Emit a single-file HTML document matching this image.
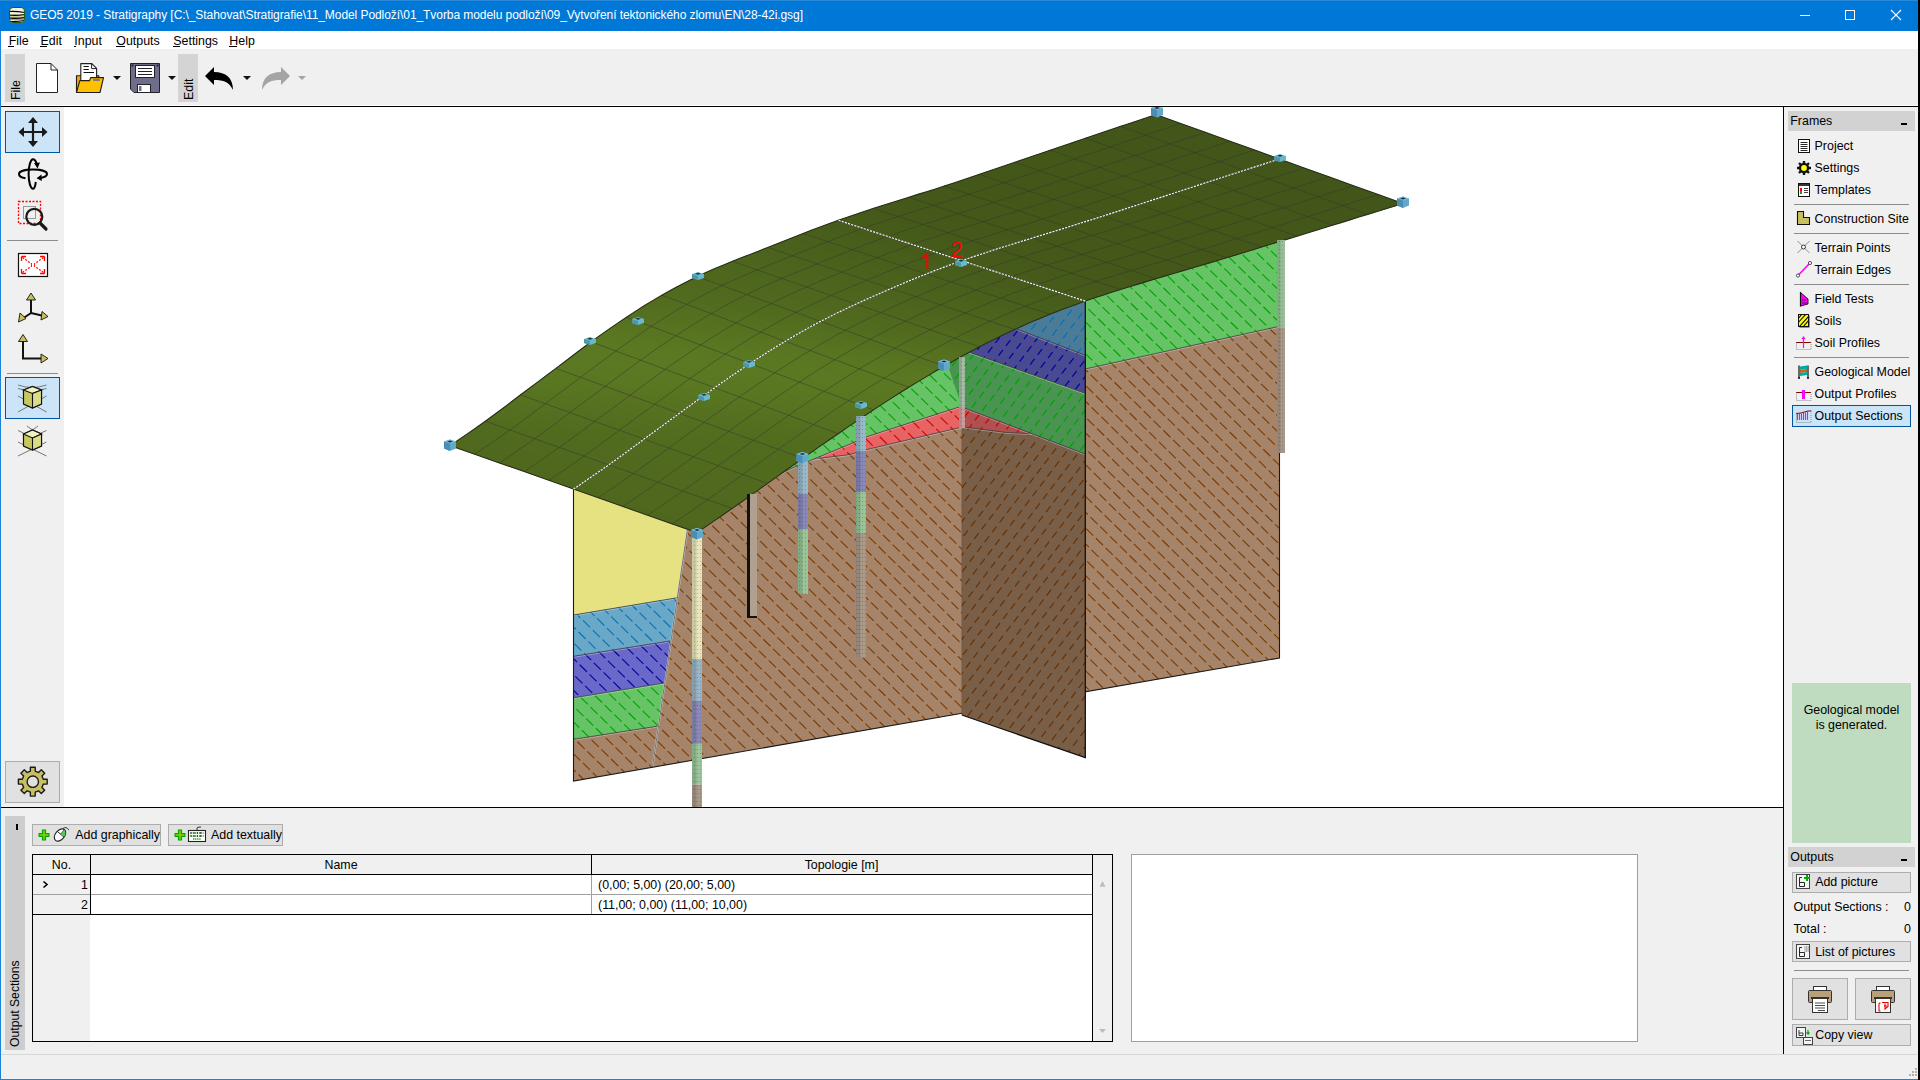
<!DOCTYPE html><html><head><meta charset="utf-8"><style>
*{margin:0;padding:0;box-sizing:border-box}
html,body{width:1920px;height:1080px;overflow:hidden;background:#000;font-family:"Liberation Sans",sans-serif;font-size:12px;color:#000}
.a{position:absolute}
.t{position:absolute;white-space:nowrap;line-height:1}
svg{overflow:visible}
</style></head><body><div class="a" style="left:0px;top:0px;width:1918px;height:1080px;background:#f0f0f0"></div><div class="a" style="left:0px;top:0px;width:1918px;height:31px;background:#0078d7"></div><div class="a" style="left:0px;top:0px;width:1918px;height:1px;background:#2a8ad9"></div><div class="a" style="left:0px;top:31px;width:1px;height:1049px;background:#1a82d9"></div><div class="a" style="left:0px;top:1079px;width:1918px;height:1px;background:#1a82d9"></div><svg class="a" style="left:8px;top:6px" width="18" height="18" viewBox="8 6 18 18"><clipPath id="ic"><rect x="9.5" y="7.5" width="15" height="15" rx="3.5"/></clipPath>
<g clip-path="url(#ic)"><rect x="9" y="7" width="16" height="16" fill="#f2f2e2"/>
<rect x="9" y="14" width="16" height="3" fill="#cfd0a0"/><rect x="9" y="17" width="16" height="3" fill="#a0a0a0"/><rect x="9" y="20" width="16" height="3" fill="#e8e8e8"/>
<path d="M9 11.5 Q15 11 25 12.5 M9 15 Q15 16 25 14.5 M9 18 Q15 19 25 17.5 M9 21.5 Q16 22 25 20.5" stroke="#000" stroke-width="1.2" fill="none"/></g>
<rect x="9.5" y="7.5" width="15" height="15" rx="3.5" fill="none" stroke="#2a5a10" stroke-width="1"/></svg><div class="t" style="left:30px;top:9.34px;font-size:12px;color:#fff;letter-spacing:-0.068px">GEO5 2019 - Stratigraphy [C:\_Stahovat\Stratigrafie\11_Model Podloží\01_Tvorba modelu podloží\09_Vytvoření tektonického zlomu\EN\28-42i.gsg]</div><svg class="a" style="left:1790px;top:8px" width="120" height="16" viewBox="1790 8 120 16"><rect x="1800" y="15" width="10" height="1" fill="#fff"/>
<rect x="1845.5" y="10.5" width="9" height="9" fill="none" stroke="#fff"/>
<path d="M1891 10 L1901 20 M1901 10 L1891 20" stroke="#fff" stroke-width="1.1"/></svg><div class="a" style="left:1px;top:31px;width:1917px;height:18px;background:#fff"></div><div class="t" style="left:8.8px;top:34.70px;font-size:12.4px;">File</div><div class="a" style="left:8px;top:46px;width:6px;height:1px;background:#000"></div><div class="t" style="left:40.5px;top:34.70px;font-size:12.4px;">Edit</div><div class="a" style="left:40px;top:46px;width:6.5px;height:1px;background:#000"></div><div class="t" style="left:74.3px;top:34.70px;font-size:12.4px;">Input</div><div class="a" style="left:74px;top:46px;width:1.5px;height:1px;background:#000"></div><div class="t" style="left:116.3px;top:34.70px;font-size:12.4px;">Outputs</div><div class="a" style="left:116px;top:46px;width:9px;height:1px;background:#000"></div><div class="t" style="left:173.3px;top:34.70px;font-size:12.4px;">Settings</div><div class="a" style="left:173px;top:46px;width:7px;height:1px;background:#000"></div><div class="t" style="left:229.3px;top:34.70px;font-size:12.4px;">Help</div><div class="a" style="left:229px;top:46px;width:8px;height:1px;background:#000"></div><div class="a" style="left:1px;top:105px;width:1917px;height:1px;background:#fff"></div><div class="a" style="left:1px;top:106px;width:1917px;height:1px;background:#000"></div><div class="a" style="left:5px;top:54px;width:20px;height:48px;background:#d4d4d4"></div><div class="t" style="left:9.6px;top:99.5px;transform:rotate(-90deg);transform-origin:0 0;font-size:12.4px">File</div><div class="a" style="left:178px;top:54px;width:20px;height:48px;background:#d4d4d4"></div><div class="t" style="left:182.6px;top:99.5px;transform:rotate(-90deg);transform-origin:0 0;font-size:12.4px">Edit</div><svg class="a" style="left:30px;top:58px" width="290" height="40" viewBox="30 58 290 40">
 <path d="M36.5 63.5 H51 L57.5 70 V92.5 H36.5 Z" fill="#fff" stroke="#222"/>
 <path d="M51 63.5 V70 H57.5" fill="none" stroke="#222"/>
 <path d="M76.5 75.8 H98.8 V78 L97 92.5 H76.5 Z" fill="#f5a800" stroke="#1e1e1e" stroke-width="1.1" stroke-linejoin="round"/>
 <path d="M80.8 63.6 H91.8 L96.6 68.4 V80.5 H80.8 Z" fill="#fff" stroke="#1e1e1e" stroke-width="1.1" stroke-linejoin="round"/>
 <path d="M91.6 63.8 V68.6 H96.4" fill="none" stroke="#1e1e1e" stroke-width="1"/>
 <path d="M83.5 66.5 H88.8 M83.5 69.5 H88.8 M83.5 72.5 H94" stroke="#111" stroke-width="1"/>
 <path d="M79.8 80.6 H89.6 L90.6 77.6 H103.5 L100 92.5 H76.5 Z" fill="#ffc000" stroke="#1e1e1e" stroke-width="1.1" stroke-linejoin="round"/>
 <rect x="93.2" y="79.2" width="6.6" height="1.6" fill="#5a6a9a"/>
 <path d="M113 76 H121 L117 80 Z" fill="#111"/>
 <path d="M130.5 63.5 H159.5 V92.5 H134 L130.5 89 Z" fill="#6e6e8c" stroke="#222"/>
 <rect x="135.5" y="65.5" width="19" height="12" fill="#fff" stroke="#222"/>
 <path d="M138 68.5 H152 M138 71.5 H152 M138 74.5 H152" stroke="#222"/>
 <rect x="137.5" y="84.5" width="13" height="8" fill="#fff" stroke="#222"/>
 <rect x="139" y="86" width="2.5" height="5" fill="#6e6e8c"/>
 <rect x="131.5" y="64.5" width="2" height="2" fill="#222"/>
 <rect x="156.5" y="64.5" width="2" height="2" fill="#222"/>
 <path d="M168 76 H176 L172 80 Z" fill="#111"/>
 <path d="M205 76 L214 67 V72 C226 72 233 78 233 90 C229 82 224 80 214 80 V85 Z" fill="#000"/>
 <path d="M243 76 H251 L247 80 Z" fill="#111"/>
 <path d="M290 76 L281 67 V72 C269 72 262 78 262 90 C266 82 271 80 281 80 V85 Z" fill="#a4a4a4"/>
 <path d="M298 76 H306 L302 80 Z" fill="#a4a4a4"/>
</svg><div class="a" style="left:64px;top:107px;width:1719px;height:700px;background:#fff"></div><div class="a" style="left:1783px;top:107px;width:1px;height:948px;background:#000"></div><div class="a" style="left:1px;top:807px;width:1782px;height:1px;background:#000"></div><div class="a" style="left:5px;top:111px;width:55px;height:42px;background:#cce4f7;border:1px solid #0055a0"></div><div class="a" style="left:5px;top:377px;width:55px;height:42px;background:#cce4f7;border:1px solid #0055a0"></div><div class="a" style="left:7px;top:240px;width:51px;height:1px;background:#8c8c8c"></div><div class="a" style="left:7px;top:373px;width:51px;height:1px;background:#8c8c8c"></div><div class="a" style="left:5px;top:761px;width:55px;height:42px;background:#e1e1e1;border:1px solid #adadad"></div><svg class="a" style="left:0px;top:107px" width="64" height="700" viewBox="0 107 64 700">
 <path d="M33 119 V145 M20 132 H46" stroke="#1a1a1a" stroke-width="2.2"/>
 <path d="M33 117 L28 123 H38 Z M33 147 L28 141 H38 Z M18.5 132 L24 127 V137 Z M47.5 132 L42 127 V137 Z" fill="#1a1a1a"/>
 <path d="M25.5 178.3 C21 177.6 19 176 19 174 C19 171.2 25.2 169.5 33 169.5 C40.8 169.5 47 171.2 47 174 C47 176 44 177.4 40 178" fill="none" stroke="#000" stroke-width="2"/>
 <path d="M35.8 182 C35.2 186.5 34.2 188.8 33 188.8 C30.6 188.8 28.6 182 28.6 174 C28.6 166 30.6 159.2 33 159.2 C34.6 159.2 35.8 161 36.6 163.5" fill="none" stroke="#000" stroke-width="2"/>
 <path d="M34 163 L40 162.5 L37.5 168.5 Z M41.5 174.5 L36.5 178.2 L41.8 181 Z" fill="#000"/>
 <rect x="18.5" y="201.5" width="22" height="22" fill="none" stroke="#f00" stroke-width="1.3" stroke-dasharray="2 1.5"/>
 <rect x="23.5" y="206.5" width="12" height="12" fill="none" stroke="#999" stroke-width="1"/>
 <circle cx="34.3" cy="216.8" r="8" fill="none" stroke="#1a1a1a" stroke-width="2.2"/>
 <path d="M40 223 L46 229" stroke="#1a1a1a" stroke-width="3.2" stroke-linecap="round"/>
 <rect x="18.5" y="253.5" width="29" height="23" fill="#fff" stroke="#111" stroke-width="1.2"/>
 <path d="M22.5 257.5 L31 263.5 M43.5 257.5 L35 263.5 M22.5 272.5 L31 266.5 M43.5 272.5 L35 266.5" stroke="#f00" stroke-width="1.2" stroke-dasharray="2 1.4"/>
 <path d="M31.5 263 V267 M34.5 263 V267" stroke="#f00" stroke-width="0.9"/>
 <path d="M21.5 256.5 H26 M21.5 256.5 V261 M44.5 256.5 H40 M44.5 256.5 V261 M21.5 273.5 H26 M21.5 273.5 V269 M44.5 273.5 H40 M44.5 273.5 V269" stroke="#f00" stroke-width="1.3"/>
 <path d="M31 299 V313 L22 319 M31 313 L44 316" stroke="#111" stroke-width="2" fill="none"/>
 <path d="M31 293 L26.5 300 H35.5 Z" fill="#c8c060" stroke="#111" stroke-width="0.9"/>
 <path d="M18.5 322 L20 313 L26 318.5 Z" fill="#c8c060" stroke="#111" stroke-width="0.9"/>
 <path d="M48 316.5 L41 320 L42 311.5 Z" fill="#c8c060" stroke="#111" stroke-width="0.9"/>
 <path d="M23 339 V358.5 H43" stroke="#111" stroke-width="2" fill="none"/>
 <path d="M23 334.5 L18.5 341.5 H27.5 Z" fill="#c8c060" stroke="#111" stroke-width="0.9"/>
 <path d="M48 358.5 L41 354 V363 Z" fill="#c8c060" stroke="#111" stroke-width="0.9"/>
 <path d="M18 385 Q32 390 46.5 385 M18 388.5 Q32 393 46.5 388.5 M18 396 L46.5 412 M46.5 396 L18 412" stroke="#777" stroke-width="1" fill="none"/>
 <path d="M23.5 390 L32.5 386.5 L41.5 390 V404 L32.5 408 L23.5 404 Z" fill="#c8c860" stroke="#111" stroke-width="1.2"/>
 <path d="M23.5 390 L32.5 393.5 L41.5 390 L32.5 386.5 Z" fill="#f0f0c0" stroke="#111" stroke-width="1.1"/>
 <path d="M32.5 393.5 V408 L41.5 404 V390 Z" fill="#dcdc88" stroke="#111" stroke-width="1.1"/>
 <path d="M27 426 L32.5 430 L38 426 M18 430.5 L23.5 433 M46.5 430.5 L41 433 M18 442 L46.5 456 M46.5 442 L18 456" stroke="#777" stroke-width="1" fill="none"/>
 <path d="M23.5 434 L32.5 430 L41.5 434 V446 L32.5 450 L23.5 446 Z" fill="#c8c860" stroke="#111" stroke-width="1.2"/>
 <path d="M23.5 434 L32.5 438 L41.5 434 L32.5 430 Z" fill="#f0f0c0" stroke="#111" stroke-width="1.1"/>
 <path d="M32.5 438 V450 L41.5 446 V434 Z" fill="#dcdc88" stroke="#111" stroke-width="1.1"/>
 <g transform="translate(32.8,781.7)">
  <path d="M10.52,-2.43 L14.40,-2.41 L14.40,2.41 L10.52,2.43 L9.16,5.72 L11.89,8.48 L8.48,11.89 L5.72,9.16 L2.43,10.52 L2.41,14.40 L-2.41,14.40 L-2.43,10.52 L-5.72,9.16 L-8.48,11.89 L-11.89,8.48 L-9.16,5.72 L-10.52,2.43 L-14.40,2.41 L-14.40,-2.41 L-10.52,-2.43 L-9.16,-5.72 L-11.89,-8.48 L-8.48,-11.89 L-5.72,-9.16 L-2.43,-10.52 L-2.41,-14.40 L2.41,-14.40 L2.43,-10.52 L5.72,-9.16 L8.48,-11.89 L11.89,-8.48 L9.16,-5.72 Z" fill="#c8c060" stroke="#1a1a1a" stroke-width="1.4" stroke-linejoin="round"/>
  <circle r="5.7" fill="#e1e1e1" stroke="#1a1a1a" stroke-width="1.4"/>
 </g>
</svg><div class="a" style="left:1784px;top:107px;width:134px;height:948px;background:#f0f0f0"></div><div class="a" style="left:1788px;top:111px;width:127px;height:20px;background:#d2d2d2"></div><div class="t" style="left:1790.3px;top:114.70px;font-size:12.4px;">Frames</div><div class="a" style="left:1901px;top:123px;width:6px;height:2px;background:#000"></div><div class="a" style="left:1792px;top:405px;width:119px;height:22px;background:#cce4f7;border:1px solid #0055a0"></div><div class="t" style="left:1814.6px;top:139.80px;font-size:12.4px;">Project</div><div class="t" style="left:1814.6px;top:162.10px;font-size:12.4px;">Settings</div><div class="t" style="left:1814.6px;top:183.90px;font-size:12.4px;">Templates</div><div class="t" style="left:1814.6px;top:212.90px;font-size:12.4px;">Construction Site</div><div class="t" style="left:1814.6px;top:241.90px;font-size:12.4px;">Terrain Points</div><div class="t" style="left:1814.6px;top:263.90px;font-size:12.4px;">Terrain Edges</div><div class="t" style="left:1814.6px;top:292.90px;font-size:12.4px;">Field Tests</div><div class="t" style="left:1814.6px;top:314.90px;font-size:12.4px;">Soils</div><div class="t" style="left:1814.6px;top:336.90px;font-size:12.4px;">Soil Profiles</div><div class="t" style="left:1814.6px;top:365.90px;font-size:12.4px;">Geological Model</div><div class="t" style="left:1814.6px;top:387.90px;font-size:12.4px;">Output Profiles</div><div class="t" style="left:1814.6px;top:409.70px;font-size:12.4px;">Output Sections</div><div class="a" style="left:1794px;top:204px;width:115px;height:1px;background:#8c8c8c"></div><div class="a" style="left:1794px;top:233px;width:115px;height:1px;background:#8c8c8c"></div><div class="a" style="left:1794px;top:284px;width:115px;height:1px;background:#8c8c8c"></div><div class="a" style="left:1794px;top:357px;width:115px;height:1px;background:#8c8c8c"></div><svg class="a" style="left:1790px;top:135px" width="26" height="295" viewBox="1790 135 26 295">
 <rect x="1798.5" y="139.5" width="11" height="13" fill="#fff" stroke="#111"/>
 <path d="M1800.5 142.5 H1807.5 M1800.5 144.5 H1807.5 M1800.5 146.5 H1807.5 M1800.5 148.5 H1807.5 M1800.5 150.5 H1807.5" stroke="#111" stroke-width="0.9"/>
 <g transform="translate(1804,168)"><circle r="5.2" fill="#111"/>
  <path d="M0,-7 V7 M-7,0 H7 M-5,-5 L5,5 M5,-5 L-5,5" stroke="#111" stroke-width="2.4"/><circle r="2.9" fill="#ff0"/></g>
 <rect x="1798.5" y="183.5" width="11" height="13" fill="#fff" stroke="#111"/>
 <rect x="1799" y="184" width="10" height="2" fill="#333"/>
 <rect x="1800" y="188" width="2" height="3" fill="#f00"/><rect x="1800" y="191" width="2" height="3" fill="#0a0"/>
 <path d="M1804 188.5 H1808 M1804 190.5 H1808 M1804 192.5 H1808" stroke="#111" stroke-width="0.8"/>
 <path d="M1797.5 211.5 H1803.5 V217.5 H1809.5 V224.5 H1797.5 Z" fill="#c8c060" stroke="#111" stroke-width="1.1"/>
 <path d="M1797.5 241 L1809.5 253 M1809.5 241 L1797.5 253" stroke="#777" stroke-width="0.8"/>
 <circle cx="1803.5" cy="247" r="2" fill="#fff" stroke="#111" stroke-width="0.8"/>
 <path d="M1798 275.5 L1809.5 263.5" stroke="#f0f" stroke-width="1.6"/>
 <circle cx="1798" cy="275.5" r="1.6" fill="#fff" stroke="#111" stroke-width="0.7"/>
 <circle cx="1810" cy="263" r="1.6" fill="#fff" stroke="#111" stroke-width="0.7"/>
 <path d="M1800.5 292.5 V306 L1808 304 V299 Z" fill="#f0f" stroke="#111" stroke-width="0.9"/>
 <path d="M1800.5 292 V306.5" stroke="#111" stroke-width="1.2"/>
 <path d="M1802 300 H1806 M1802 303 H1807" stroke="#111" stroke-width="0.7"/>
 <rect x="1799.5" y="315.5" width="10" height="12" fill="#333"/>
 <rect x="1798.5" y="314.5" width="10" height="12" fill="#ffff00" stroke="#111"/>
 <clipPath id="soilc"><rect x="1799" y="315" width="9" height="11"/></clipPath>
 <path clip-path="url(#soilc)" d="M1797 320 L1803 313 M1797 324 L1807 313 M1799 327 L1809 316 M1803 327 L1809 320" stroke="#111" stroke-width="1.1"/>
 <path d="M1796 342.5 H1811" stroke="#800" stroke-width="1"/>
 <path d="M1796.5 342.5 V349.5 H1811 V342.5" stroke="#777" stroke-width="0.8" stroke-dasharray="1 1" fill="none"/>
 <path d="M1803.5 338 V348" stroke="#f0f" stroke-width="1.2"/>
 <path d="M1803.5 336 L1801.5 339 H1805.5 Z" fill="#f0f"/>
 <path d="M1799 365.5 V378 M1808 365.5 V378" stroke="#111" stroke-width="1.2"/>
 <circle cx="1799" cy="378" r="1" fill="#111"/><circle cx="1808" cy="378" r="1" fill="#111"/>
 <path d="M1800 366.5 L1807 365.5 V369 L1800 370 Z" fill="#0aa"/>
 <path d="M1800 370 L1807 369 V372 L1800 373 Z" fill="#c60"/>
 <path d="M1800 373 L1807 372 V375 L1800 376 Z" fill="#0aa"/>
 <path d="M1796 392.5 H1811" stroke="#800" stroke-width="1"/>
 <path d="M1796.5 392.5 V400.5 H1811 V392.5" stroke="#777" stroke-width="0.8" stroke-dasharray="1 1" fill="none"/>
 <rect x="1802" y="390" width="3" height="9" fill="#f0f"/>
 <path d="M1796 413.5 L1801 413 L1808 411 L1811.5 411" stroke="#800" stroke-width="1" fill="none"/>
 <path d="M1796.5 413.5 V422.5 H1811 V413.5" stroke="#777" stroke-width="0.8" stroke-dasharray="1 1" fill="none"/>
 <path d="M1797.5 414 V420 M1799.5 414 V420 M1801.5 413.5 V420 M1803.5 413 V420 M1805.5 412.5 V420 M1807.5 412 V420" stroke="#f0f" stroke-width="1.1"/>
</svg><div class="a" style="left:1792px;top:683px;width:119px;height:160px;background:#c0dcc0"></div><div class="t" style="left:1651.5px;width:400px;text-align:center;top:704.40px;font-size:12.4px;">Geological model</div><div class="t" style="left:1651.5px;width:400px;text-align:center;top:719.40px;font-size:12.4px;">is generated.</div><div class="a" style="left:1788px;top:847px;width:127px;height:20px;background:#d2d2d2"></div><div class="t" style="left:1790.3px;top:851.30px;font-size:12.4px;">Outputs</div><div class="a" style="left:1901px;top:859px;width:6px;height:2px;background:#000"></div><div class="a" style="left:1792px;top:872px;width:119px;height:21px;background:#e1e1e1;border:1px solid #adadad"></div><div class="t" style="left:1815.2px;top:876.30px;font-size:12.4px;">Add picture</div><div class="t" style="left:1793.5px;top:900.70px;font-size:12.4px;">Output Sections :</div><div class="t" style="left:1711px;width:200px;text-align:right;top:900.70px;font-size:12.4px;">0</div><div class="t" style="left:1793.5px;top:923.40px;font-size:12.4px;">Total :</div><div class="t" style="left:1711px;width:200px;text-align:right;top:923.40px;font-size:12.4px;">0</div><div class="a" style="left:1792px;top:941px;width:119px;height:21px;background:#e1e1e1;border:1px solid #adadad"></div><div class="t" style="left:1815.2px;top:946.30px;font-size:12.4px;">List of pictures</div><div class="a" style="left:1794px;top:970px;width:115px;height:1px;background:#8c8c8c"></div><div class="a" style="left:1792px;top:978px;width:56px;height:42px;background:#e1e1e1;border:1px solid #adadad"></div><div class="a" style="left:1855px;top:978px;width:56px;height:42px;background:#e1e1e1;border:1px solid #adadad"></div><div class="a" style="left:1792px;top:1024px;width:119px;height:22px;background:#e1e1e1;border:1px solid #adadad"></div><div class="t" style="left:1815.2px;top:1028.70px;font-size:12.4px;">Copy view</div><svg class="a" style="left:1790px;top:870px" width="125" height="180" viewBox="1790 870 125 180">
 <rect x="1796.5" y="874.5" width="13" height="14" fill="#f4f4f4" stroke="#444"/>
 <path d="M1799.5 877.5 V886.5 H1804.5 V882.5 H1799.5 M1799.5 877.5 H1802" stroke="#111" stroke-width="0.9" fill="none"/>
 <path d="M1807 875 V881 M1804 878 H1810" stroke="#0a0" stroke-width="2"/>
 <rect x="1796.5" y="944.5" width="13" height="14" fill="#f4f4f4" stroke="#444"/>
 <path d="M1799.5 947.5 V956.5 H1804.5 V952.5 H1799.5 M1799.5 947.5 H1802" stroke="#111" stroke-width="0.9" fill="none"/>
 <path d="M1804.5 947 H1809 M1804.5 949 H1809 M1804.5 951 H1809" stroke="#111" stroke-width="0.7" stroke-dasharray="1 0.6"/>
 <g>
  <rect x="1813.5" y="986.5" width="13" height="6" fill="#fff" stroke="#333"/>
  <rect x="1808.5" y="990.5" width="23" height="12" rx="1" fill="#b8a078" stroke="#333"/>
  <rect x="1811" y="997" width="18" height="2" fill="#333"/>
  <rect x="1812.5" y="998.5" width="15" height="14" fill="#fff" stroke="#333"/>
  <path d="M1815 1003 H1825 M1815 1005.5 H1825 M1815 1008 H1825 M1818 1010.5 H1825" stroke="#333" stroke-width="0.9"/>
 </g>
 <g transform="translate(63,0)">
  <rect x="1813.5" y="986.5" width="13" height="6" fill="#fff" stroke="#333"/>
  <rect x="1808.5" y="990.5" width="23" height="12" rx="1" fill="#b8a078" stroke="#333"/>
  <rect x="1811" y="997" width="18" height="2" fill="#333"/>
  <rect x="1812.5" y="998.5" width="15" height="14" fill="#fff" stroke="#333"/>
  <path d="M1816 1003 V1011 H1817.5 M1816 1003 H1817.5 M1819 1002.5 H1825 V1006.5 L1822 1009 V1003.5 M1821 1006 H1824" stroke="#e00" stroke-width="1.1" fill="none"/>
 </g>
 <rect x="1796.5" y="1027.5" width="9" height="10" fill="#f4f4f4" stroke="#444"/>
 <path d="M1799 1030 V1035.5 H1803 V1033 H1799" stroke="#111" stroke-width="0.8" fill="none"/>
 <path d="M1808 1030 V1034 L1806.5 1032.5 M1808 1034 L1809.5 1032.5" stroke="#0a0" stroke-width="1.1" fill="none"/>
 <rect x="1803.5" y="1037.5" width="9" height="7" fill="#f4f4f4" stroke="#444"/>
 <path d="M1805 1040.5 H1811" stroke="#444" stroke-width="0.8"/>
</svg><svg class="a" style="left:1900px;top:1060px" width="18" height="19" viewBox="1900 1060 18 19"><g fill="#b0b0b0"><rect x="1915" y="1068" width="2" height="2"/><rect x="1912" y="1071" width="2" height="2"/><rect x="1915" y="1071" width="2" height="2"/>
<rect x="1909" y="1074" width="2" height="2"/><rect x="1912" y="1074" width="2" height="2"/><rect x="1915" y="1074" width="2" height="2"/></g></svg><div class="a" style="left:1px;top:1054px;width:1917px;height:1px;background:#d8d8d8"></div><div class="a" style="left:5px;top:816px;width:20px;height:234px;background:#cdcdcd"></div><div class="a" style="left:16px;top:824px;width:2px;height:6px;background:#000"></div><div class="t" style="left:8.7px;top:1046.5px;transform:rotate(-90deg);transform-origin:0 0;font-size:12.2px">Output Sections</div><div class="a" style="left:32px;top:824px;width:129px;height:22px;background:#e1e1e1;border:1px solid #adadad"></div><div class="t" style="left:75.3px;top:828.60px;font-size:12.4px;">Add graphically</div><div class="a" style="left:168px;top:824px;width:115px;height:22px;background:#e1e1e1;border:1px solid #adadad"></div><div class="t" style="left:211px;top:828.60px;font-size:12.4px;">Add textually</div><svg class="a" style="left:34px;top:826px" width="250" height="20" viewBox="34 826 250 20">
 <path d="M44 829.5 V840.5 M38.5 835 H49.5" stroke="#00a800" stroke-width="4.2"/>
 <path d="M44 830.6 V839.4 M39.6 835 H48.4" stroke="#8ad000" stroke-width="1.6"/>
 <g transform="translate(60,835) rotate(40)"><ellipse rx="4.6" ry="7" fill="#fff" stroke="#222" stroke-width="1.1"/><path d="M-4.4,-1 H4.4 M0,-7 V-1" stroke="#222" stroke-width="0.9"/><path d="M0.3,-6.5 Q3.5,-6 4.2,-1.4 H0.3 Z" fill="#5c5"/></g>
 <path d="M63 828.5 Q66 826 69 830" stroke="#222" stroke-width="0.9" fill="none"/>
 <path d="M180 829.5 V840.5 M174.5 835 H185.5" stroke="#00a800" stroke-width="4.2"/>
 <path d="M180 830.6 V839.4 M175.6 835 H184.4" stroke="#8ad000" stroke-width="1.6"/>
 <rect x="188.5" y="830.5" width="17" height="11" fill="#fff" stroke="#222" stroke-width="1.1"/>
 <path d="M190.5 833 H203.5 M190.5 836 H203.5 M193 839 H201" stroke="#0a0" stroke-width="1.3" stroke-dasharray="1.3 0.8"/>
 <path d="M190.5 833 H203.5 M190.5 836 H203.5" stroke="#111" stroke-width="1.3" stroke-dasharray="0.9 2.3"/>
 <path d="M197 830 V828 Q197 827 201 827" stroke="#222" stroke-width="0.9" fill="none"/>
</svg><div class="a" style="left:32px;top:854px;width:1081px;height:188px;background:#fff;border:1px solid #000"></div><div class="a" style="left:33px;top:855px;width:57px;height:186px;background:#f0f0f0"></div><div class="a" style="left:33px;top:855px;width:1059px;height:19px;background:#f0f0f0"></div><div class="a" style="left:1092px;top:855px;width:20px;height:186px;background:#f0f0f0"></div><div class="a" style="left:1092px;top:854px;width:1px;height:188px;background:#000"></div><div class="a" style="left:33px;top:874px;width:1059px;height:1px;background:#000"></div><div class="a" style="left:33px;top:894px;width:1059px;height:1px;background:#a0a0a0"></div><div class="a" style="left:33px;top:914px;width:1059px;height:1px;background:#000"></div><div class="a" style="left:90px;top:855px;width:1px;height:59px;background:#000"></div><div class="a" style="left:591px;top:855px;width:1px;height:19px;background:#000"></div><div class="a" style="left:591px;top:875px;width:1px;height:39px;background:#a0a0a0"></div><div class="a" style="left:90px;top:914px;width:1px;height:1px;background:#000"></div><div class="t" style="left:-138.5px;width:400px;text-align:center;top:859.10px;font-size:12.4px;">No.</div><div class="t" style="left:141.0px;width:400px;text-align:center;top:859.10px;font-size:12.4px;">Name</div><div class="t" style="left:641.5px;width:400px;text-align:center;top:859.10px;font-size:12.4px;">Topologie [m]</div><div class="t" style="left:-112px;width:200px;text-align:right;top:879.10px;font-size:12.4px;">1</div><div class="t" style="left:-112px;width:200px;text-align:right;top:899.10px;font-size:12.4px;">2</div><div class="t" style="left:598px;top:879.10px;font-size:12.4px;">(0,00; 5,00) (20,00; 5,00)</div><div class="t" style="left:598px;top:899.10px;font-size:12.4px;">(11,00; 0,00) (11,00; 10,00)</div><svg class="a" style="left:40px;top:878px" width="10" height="12" viewBox="40 878 10 12"><path d="M43.5 881.5 L47 884.5 L43.5 887.5" stroke="#000" stroke-width="1.6" fill="none"/></svg><svg class="a" style="left:1095px;top:878px" width="16" height="158" viewBox="1095 878 16 158"><path d="M1099.5 886.7 L1102.5 881 L1105.5 886.7 Z M1099 1029 H1106 L1102.5 1033 Z" fill="#bdbdbd"/></svg><div class="a" style="left:1131px;top:854px;width:507px;height:188px;background:#fff;border:1px solid #a0a0a0"></div><div class="a" style="left:1918px;top:0px;width:2px;height:1080px;background:#000"></div><svg class="a" style="left:0;top:0" width="1920" height="1080" viewBox="0 0 1920 1080"><defs><clipPath id="view"><rect x="64" y="107" width="1719" height="700"/></clipPath></defs><g clip-path="url(#view)"><clipPath id="hc1"><polygon points="573.5,489.1 582.3,483.1 591.1,477.1 600.0,471.0 608.8,464.8 617.6,458.5 626.5,452.1 635.3,445.6 644.1,439.1 652.9,432.7 661.8,426.2 670.6,419.8 679.4,413.3 688.2,406.9 697.0,400.5 705.9,394.1 714.7,387.7 723.5,381.5 732.4,375.3 741.2,369.4 750.0,363.5 758.8,357.7 767.6,352.1 776.5,346.6 785.3,341.3 794.1,336.1 803.0,331.0 811.8,326.1 820.6,321.4 829.4,316.8 838.2,312.5 847.1,308.2 855.9,304.1 864.7,300.1 873.5,296.1 882.4,292.3 891.2,288.5 900.0,284.7 908.8,281.0 917.7,277.4 926.5,273.9 935.3,270.4 944.2,267.1 953.0,263.8 961.8,260.7 970.6,257.6 979.5,254.7 988.3,251.8 997.1,248.9 1005.9,246.2 1014.8,243.4 1023.6,240.7 1032.4,238.0 1041.2,235.3 1050.0,232.6 1058.9,229.9 1067.7,227.2 1076.5,224.4 1085.3,221.6 1094.2,218.9 1103.0,216.1 1111.8,213.2 1120.7,210.4 1129.5,207.5 1138.3,204.7 1147.1,201.8 1155.9,198.9 1164.8,196.1 1173.6,193.2 1182.4,190.3 1191.2,187.5 1200.1,184.6 1208.9,181.7 1217.7,178.9 1226.5,176.0 1235.4,173.2 1244.2,170.4 1253.0,167.5 1261.8,164.7 1270.7,161.8 1279.5,159.0 1279.5,658.0 573.5,781.0"/></clipPath><polygon points="573.5,489.1 582.3,483.1 591.1,477.1 600.0,471.0 608.8,464.8 617.6,458.5 626.5,452.1 635.3,445.6 644.1,439.1 652.9,432.7 661.8,426.2 670.6,419.8 679.4,413.3 688.2,406.9 697.0,400.5 705.9,394.1 714.7,387.7 723.5,381.5 732.4,375.3 741.2,369.4 750.0,363.5 758.8,357.7 767.6,352.1 776.5,346.6 785.3,341.3 794.1,336.1 803.0,331.0 811.8,326.1 820.6,321.4 829.4,316.8 838.2,312.5 847.1,308.2 855.9,304.1 864.7,300.1 873.5,296.1 882.4,292.3 891.2,288.5 900.0,284.7 908.8,281.0 917.7,277.4 926.5,273.9 935.3,270.4 944.2,267.1 953.0,263.8 961.8,260.7 970.6,257.6 979.5,254.7 988.3,251.8 997.1,248.9 1005.9,246.2 1014.8,243.4 1023.6,240.7 1032.4,238.0 1041.2,235.3 1050.0,232.6 1058.9,229.9 1067.7,227.2 1076.5,224.4 1085.3,221.6 1094.2,218.9 1103.0,216.1 1111.8,213.2 1120.7,210.4 1129.5,207.5 1138.3,204.7 1147.1,201.8 1155.9,198.9 1164.8,196.1 1173.6,193.2 1182.4,190.3 1191.2,187.5 1200.1,184.6 1208.9,181.7 1217.7,178.9 1226.5,176.0 1235.4,173.2 1244.2,170.4 1253.0,167.5 1261.8,164.7 1270.7,161.8 1279.5,159.0 1279.5,658.0 573.5,781.0" fill="#a5846a"/><path clip-path="url(#hc1)" d="M920.39 -204.54L1599.84 463.15M906.26 -202.58L1591.92 471.21M901.91 -191.02L1584.00 479.27M897.55 -179.45L1576.08 487.33M883.43 -177.49L1568.16 495.39M879.07 -165.93L1560.24 503.45M864.95 -163.97L1552.32 511.51M860.60 -152.40L1544.40 519.57M856.24 -140.84L1536.48 527.63M842.12 -138.88L1528.56 535.69M837.76 -127.31L1520.64 543.75M833.41 -115.75L1512.72 551.81M819.28 -113.79L1504.80 559.87M814.93 -102.22L1496.87 567.93M810.57 -90.66L1488.95 575.99M796.45 -88.70L1481.03 584.05M792.09 -77.13L1473.11 592.11M777.97 -75.17L1465.19 600.16M773.61 -63.60L1457.27 608.22M769.26 -52.04L1449.35 616.28M755.14 -50.08L1441.43 624.34M750.78 -38.51L1433.51 632.40M746.43 -26.95L1425.59 640.46M732.30 -24.99L1417.67 648.52M727.95 -13.42L1409.75 656.58M713.82 -11.46L1401.83 664.64M709.47 0.10L1393.91 672.70M705.11 11.67L1385.99 680.76M690.99 13.63L1378.07 688.82M686.63 25.19L1370.15 696.88M682.28 36.76L1362.23 704.94M668.15 38.72L1354.31 713.00M663.80 50.28L1346.39 721.06M659.45 61.85L1338.47 729.12M645.32 63.81L1330.55 737.18M640.97 75.37L1322.63 745.24M626.84 77.33L1314.71 753.30M622.49 88.90L1306.79 761.36M618.13 100.46L1298.87 769.42M604.01 102.43L1290.95 777.48M599.65 113.99L1283.03 785.54M595.30 125.55L1275.11 793.60M581.17 127.52L1267.19 801.66M576.82 139.08L1259.27 809.72M572.47 150.64L1251.35 817.78M558.34 152.61L1243.43 825.84M553.99 164.17L1235.51 833.90M539.86 166.13L1227.59 841.96M535.51 177.70L1219.67 850.02M531.15 189.26L1211.74 858.08M517.03 191.22L1203.82 866.14M512.67 202.79L1195.90 874.20M508.32 214.35L1187.98 882.26M494.19 216.31L1180.06 890.32M489.84 227.88L1172.14 898.37M485.49 239.44L1164.22 906.43M471.36 241.40L1156.30 914.49M467.01 252.97L1148.38 922.55M452.88 254.93L1140.46 930.61M448.53 266.49L1132.54 938.67M444.17 278.06L1124.62 946.73M430.05 280.02L1116.70 954.79M425.69 291.58L1108.78 962.85M421.34 303.15L1100.86 970.91M407.21 305.11L1092.94 978.97M402.86 316.67L1085.02 987.03M398.51 328.24L1077.10 995.09M384.38 330.20L1069.18 1003.15M380.03 341.76L1061.26 1011.21M365.90 343.73L1053.34 1019.27M361.55 355.29L1045.42 1027.33M357.19 366.86L1037.50 1035.39M343.07 368.82L1029.58 1043.45M338.71 380.38L1021.66 1051.51M334.36 391.95L1013.74 1059.57M320.23 393.91L1005.82 1067.63M315.88 405.47L997.90 1075.69M311.53 417.04L989.98 1083.75M297.40 419.00L982.06 1091.81M293.05 430.56L974.14 1099.87M278.92 432.52L966.22 1107.93M274.57 444.09L958.30 1115.99M270.21 455.65L950.38 1124.05M256.09 457.61L942.46 1132.11M251.73 469.18L934.54 1140.17M247.38 480.74L926.61 1148.23" stroke="#7a3a00" stroke-width="1.1" stroke-dasharray="10 3.7" fill="none"/><polygon points="573.5,470.0 696.2,470.0 677.4,597.7 573.5,615.0" fill="#e6e282" /><clipPath id="hc2"><polygon points="573.5,615.0 677.4,597.7 671.1,640.8 573.5,656.3"/></clipPath><polygon points="573.5,615.0 677.4,597.7 671.1,640.8 573.5,656.3" fill="#6aa8c8"/><path clip-path="url(#hc2)" d="M617.83 527.93L717.36 625.73M613.48 539.49L709.44 633.79M609.13 551.06L701.52 641.85M595.00 553.02L693.60 649.91M590.65 564.58L685.68 657.97M576.52 566.54L677.76 666.03M572.17 578.11L669.84 674.09M567.81 589.67L661.92 682.15M553.69 591.64L654.00 690.21M549.33 603.20L646.08 698.27M544.98 614.76L638.16 706.33M530.85 616.73L630.24 714.39M526.50 628.29L622.32 722.45" stroke="#0070c0" stroke-width="1.1" stroke-dasharray="10 3.7" fill="none"/><clipPath id="hc3"><polygon points="573.5,656.3 671.1,640.8 664.9,682.9 573.5,697.8"/></clipPath><polygon points="573.5,656.3 671.1,640.8 664.9,682.9 573.5,697.8" fill="#6a68c8"/><path clip-path="url(#hc3)" d="M614.54 572.22L710.88 666.89M610.19 583.79L702.96 674.95M605.83 595.35L695.04 683.01M591.71 597.31L687.12 691.07M587.36 608.88L679.20 699.13M583.00 620.44L671.28 707.19M568.88 622.40L663.36 715.25M564.52 633.97L655.44 723.31M550.40 635.93L647.52 731.37M546.04 647.49L639.60 739.43M541.69 659.06L631.68 747.49M527.56 661.02L623.76 755.55M523.21 672.59L615.84 763.61" stroke="#0000a0" stroke-width="1.1" stroke-dasharray="10 3.7" fill="none"/><clipPath id="hc4"><polygon points="573.5,697.8 664.9,682.9 658.5,726.0 573.5,739.3"/></clipPath><polygon points="573.5,697.8 664.9,682.9 658.5,726.0 573.5,739.3" fill="#66c466"/><path clip-path="url(#hc4)" d="M611.25 616.52L704.43 708.08M606.90 628.08L696.51 716.14M602.54 639.65L688.59 724.20M588.42 641.61L680.67 732.26M584.06 653.17L672.75 740.32M579.71 664.74L664.83 748.38M565.59 666.70L656.91 756.44M561.23 678.26L648.99 764.50M556.88 689.83L641.07 772.56M542.75 691.79L633.15 780.62M538.40 703.35L625.23 788.68M524.27 705.32L617.31 796.74" stroke="#00a000" stroke-width="1.1" stroke-dasharray="10 3.7" fill="none"/><polyline points="573.5,615.0 677.4,597.7" fill="none" stroke="#e8e8e8" stroke-width="0.9" stroke-opacity="0.45" transform="translate(0,0.9)"/><polyline points="573.5,615.0 677.4,597.7" fill="none" stroke="#3c3c44" stroke-width="0.9" stroke-opacity="0.85"/><polyline points="573.5,656.3 671.1,640.8" fill="none" stroke="#e8e8e8" stroke-width="0.9" stroke-opacity="0.45" transform="translate(0,0.9)"/><polyline points="573.5,656.3 671.1,640.8" fill="none" stroke="#3c3c44" stroke-width="0.9" stroke-opacity="0.85"/><polyline points="573.5,697.8 664.9,682.9" fill="none" stroke="#e8e8e8" stroke-width="0.9" stroke-opacity="0.45" transform="translate(0,0.9)"/><polyline points="573.5,697.8 664.9,682.9" fill="none" stroke="#3c3c44" stroke-width="0.9" stroke-opacity="0.85"/><polyline points="573.5,739.3 658.5,726.0" fill="none" stroke="#e8e8e8" stroke-width="0.9" stroke-opacity="0.45" transform="translate(0,0.9)"/><polyline points="573.5,739.3 658.5,726.0" fill="none" stroke="#3c3c44" stroke-width="0.9" stroke-opacity="0.85"/><line x1="696.2" y1="470.0" x2="652.4" y2="767.5" stroke="#e0e0e0" stroke-width="1.6"/><line x1="696.2" y1="470.0" x2="652.4" y2="767.5" stroke="#404040" stroke-width="0.7"/><clipPath id="hc5"><polygon points="700.0,420.0 679.4,413.3 689.6,405.9 699.7,398.5 709.9,391.2 720.1,383.9 730.3,376.8 740.4,369.9 750.6,363.1 760.8,356.5 770.9,350.0 781.1,343.8 791.3,337.7 801.5,331.9 811.6,326.2 821.8,320.8 832.0,315.6 842.1,310.6 852.3,305.8 862.5,301.1 872.7,296.5 882.8,292.1 893.0,287.7 903.2,283.4 913.3,279.2 923.5,275.1 933.7,271.1 943.9,267.2 954.0,263.4 964.2,259.8 974.4,256.4 984.5,253.0 994.7,249.7 1004.9,246.5 1015.0,243.3 1025.2,240.2 1035.4,237.0 1045.6,233.9 1055.7,230.8 1065.9,227.7 1076.1,224.6 1086.2,221.4 1096.4,218.2 1106.6,214.9 1116.8,211.6 1126.9,208.3 1137.1,205.0 1147.3,201.7 1157.4,198.4 1167.6,195.1 1177.8,191.8 1188.0,188.5 1198.1,185.2 1208.3,181.9 1218.5,178.7 1228.6,175.4 1238.8,172.1 1249.0,168.8 1259.2,165.5 1269.3,162.3 1279.5,159.0 1279.5,326.3 1085.0,369.0 960.0,406.7 866.8,436.7 850.0,444.1 814.0,459.0 790.0,469.0 740.0,494.0"/></clipPath><polygon points="700.0,420.0 679.4,413.3 689.6,405.9 699.7,398.5 709.9,391.2 720.1,383.9 730.3,376.8 740.4,369.9 750.6,363.1 760.8,356.5 770.9,350.0 781.1,343.8 791.3,337.7 801.5,331.9 811.6,326.2 821.8,320.8 832.0,315.6 842.1,310.6 852.3,305.8 862.5,301.1 872.7,296.5 882.8,292.1 893.0,287.7 903.2,283.4 913.3,279.2 923.5,275.1 933.7,271.1 943.9,267.2 954.0,263.4 964.2,259.8 974.4,256.4 984.5,253.0 994.7,249.7 1004.9,246.5 1015.0,243.3 1025.2,240.2 1035.4,237.0 1045.6,233.9 1055.7,230.8 1065.9,227.7 1076.1,224.6 1086.2,221.4 1096.4,218.2 1106.6,214.9 1116.8,211.6 1126.9,208.3 1137.1,205.0 1147.3,201.7 1157.4,198.4 1167.6,195.1 1177.8,191.8 1188.0,188.5 1198.1,185.2 1208.3,181.9 1218.5,178.7 1228.6,175.4 1238.8,172.1 1249.0,168.8 1259.2,165.5 1269.3,162.3 1279.5,159.0 1279.5,326.3 1085.0,369.0 960.0,406.7 866.8,436.7 850.0,444.1 814.0,459.0 790.0,469.0 740.0,494.0" fill="#66c466"/><path clip-path="url(#hc5)" d="M973.60 -168.10L1472.50 322.17M959.47 -166.13L1464.58 330.23M955.12 -154.57L1456.66 338.29M950.77 -143.01L1448.74 346.35M936.64 -141.04L1440.82 354.41M932.29 -129.48L1432.90 362.47M918.16 -127.52L1424.98 370.53M913.81 -115.95L1417.06 378.59M909.45 -104.39L1409.14 386.65M895.33 -102.43L1401.22 394.71M890.97 -90.86L1393.30 402.77M886.62 -79.30L1385.38 410.83M872.49 -77.34L1377.46 418.89M868.14 -65.77L1369.54 426.95M863.79 -54.21L1361.62 435.01M849.66 -52.25L1353.70 443.07M845.31 -40.68L1345.78 451.13M831.18 -38.72L1337.86 459.19M826.83 -27.16L1329.94 467.25M822.47 -15.59L1322.02 475.31M808.35 -13.63L1314.10 483.37M803.99 -2.07L1306.18 491.43M799.64 9.50L1298.26 499.49M785.51 11.46L1290.34 507.55M781.16 23.02L1282.42 515.61M776.81 34.59L1274.50 523.67M762.68 36.55L1266.57 531.73M758.33 48.11L1258.65 539.79M744.20 50.08L1250.73 547.85M739.85 61.64L1242.81 555.91M735.49 73.20L1234.89 563.97M721.37 75.17L1226.97 572.02M717.01 86.73L1219.05 580.08M712.66 98.30L1211.13 588.14M698.53 100.26L1203.21 596.20M694.18 111.82L1195.29 604.26M689.82 123.39L1187.37 612.32M675.70 125.35L1179.45 620.38M671.35 136.91L1171.53 628.44M657.22 138.87L1163.61 636.50M652.87 150.44L1155.69 644.56M648.51 162.00L1147.77 652.62M634.39 163.96L1139.85 660.68M630.03 175.53L1131.93 668.74M625.68 187.09L1124.01 676.80M611.55 189.05L1116.09 684.86M607.20 200.62L1108.17 692.92M602.84 212.18L1100.25 700.98M588.72 214.14L1092.33 709.04M584.37 225.71L1084.41 717.10M570.24 227.67L1076.49 725.16M565.89 239.23L1068.57 733.22M561.53 250.80L1060.65 741.28M547.41 252.76L1052.73 749.34M543.05 264.33L1044.81 757.40M538.70 275.89L1036.89 765.46M524.57 277.85L1028.97 773.52M520.22 289.42L1021.05 781.58M506.09 291.38L1013.13 789.64M501.74 302.94L1005.21 797.70M497.38 314.51L997.29 805.76M483.26 316.47L989.37 813.82M478.91 328.03L981.44 821.88" stroke="#00a000" stroke-width="1.1" stroke-dasharray="10 3.7" fill="none"/><clipPath id="hc6"><polygon points="814.0,459.0 850.0,444.1 866.8,436.7 960.0,406.7 1000.0,395.0 1000.0,423.0 960.0,427.5 866.8,449.5 850.0,454.5"/></clipPath><polygon points="814.0,459.0 850.0,444.1 866.8,436.7 960.0,406.7 1000.0,395.0 1000.0,423.0 960.0,427.5 866.8,449.5 850.0,454.5" fill="#e86464"/><path clip-path="url(#hc6)" d="M902.67 269.18L1057.49 421.32M898.32 280.74L1049.57 429.38M893.96 292.31L1041.65 437.43M879.84 294.27L1033.73 445.49M875.48 305.83L1025.81 453.55M861.36 307.79L1017.89 461.61M857.00 319.36L1009.97 469.67M852.65 330.92L1002.05 477.73M838.52 332.88L994.13 485.79M834.17 344.45L986.21 493.85M829.82 356.01L978.29 501.91M815.69 357.97L970.37 509.97M811.34 369.54L962.45 518.03M806.98 381.10L954.52 526.09M792.86 383.07L946.60 534.15M788.50 394.63L938.68 542.21M774.38 396.59L930.76 550.27M770.02 408.16L922.84 558.33M765.67 419.72L914.92 566.39M751.54 421.68L907.00 574.45" stroke="#d00000" stroke-width="1.1" stroke-dasharray="10 3.7" fill="none"/><polyline points="814.0,459.0 850.0,454.5 866.8,449.5 960.0,427.5 1000.0,423.0" fill="none" stroke="#e8e8e8" stroke-width="0.9" stroke-opacity="0.45" transform="translate(0,0.9)"/><polyline points="814.0,459.0 850.0,454.5 866.8,449.5 960.0,427.5 1000.0,423.0" fill="none" stroke="#3c3c44" stroke-width="0.9" stroke-opacity="0.85"/><polyline points="740.0,494.0 790.0,469.0 814.0,459.0 850.0,444.1 866.8,436.7 960.0,406.7" fill="none" stroke="#e8e8e8" stroke-width="0.9" stroke-opacity="0.45" transform="translate(0,0.9)"/><polyline points="740.0,494.0 790.0,469.0 814.0,459.0 850.0,444.1 866.8,436.7 960.0,406.7" fill="none" stroke="#3c3c44" stroke-width="0.9" stroke-opacity="0.85"/><polyline points="1085.0,369.0 1279.5,326.3" fill="none" stroke="#e8e8e8" stroke-width="0.9" stroke-opacity="0.45" transform="translate(0,0.9)"/><polyline points="1085.0,369.0 1279.5,326.3" fill="none" stroke="#3c3c44" stroke-width="0.9" stroke-opacity="0.85"/><polyline points="573.5,470 573.5,781 1279.5,658.0 1279.5,240" fill="none" stroke="#1a1a1a" stroke-width="1.1"/><clipPath id="hc7"><polygon points="1085.3,301.1 1079.1,299.1 1073.0,297.1 1066.8,295.0 1060.6,293.0 1054.4,291.0 1048.2,289.0 1042.1,286.9 1035.9,284.9 1029.7,282.9 1023.5,280.9 1017.4,278.9 1011.2,276.8 1005.0,274.8 998.8,272.8 992.7,270.8 986.5,268.8 980.3,266.7 974.1,264.7 968.0,262.7 961.8,260.7 961.8,715.0 1085.3,757.6"/></clipPath><polygon points="1085.3,301.1 1079.1,299.1 1073.0,297.1 1066.8,295.0 1060.6,293.0 1054.4,291.0 1048.2,289.0 1042.1,286.9 1035.9,284.9 1029.7,282.9 1023.5,280.9 1017.4,278.9 1011.2,276.8 1005.0,274.8 998.8,272.8 992.7,270.8 986.5,268.8 980.3,266.7 974.1,264.7 968.0,262.7 961.8,260.7 961.8,715.0 1085.3,757.6" fill="#7a5f48"/><path clip-path="url(#hc7)" d="M646.66 565.03L970.18 140.35M657.19 568.03L978.29 146.53M667.73 571.03L986.41 152.71M670.82 583.81L994.52 158.89M681.35 586.81L1002.64 165.07M691.89 589.81L1010.75 171.25M702.43 592.81L1018.86 177.43M705.51 605.59L1026.98 183.61M716.05 608.59L1035.09 189.79M726.59 611.59L1043.20 195.98M729.67 624.37L1051.32 202.16M740.21 627.37L1059.43 208.34M750.75 630.37L1067.55 214.52M753.83 643.16L1075.66 220.70M764.37 646.16L1083.77 226.88M774.91 649.16L1091.89 233.06M777.99 661.94L1100.00 239.24M788.53 664.94L1108.11 245.42M799.07 667.94L1116.23 251.60M802.15 680.72L1124.34 257.79M812.69 683.72L1132.46 263.97M823.23 686.72L1140.57 270.15M826.31 699.50L1148.68 276.33M836.85 702.50L1156.80 282.51M847.39 705.50L1164.91 288.69M850.47 718.28L1173.03 294.87M861.01 721.28L1181.14 301.05M871.55 724.28L1189.25 307.23M874.63 737.07L1197.37 313.42M885.17 740.07L1205.48 319.60M895.71 743.06L1213.59 325.78M898.79 755.85L1221.71 331.96M909.33 758.85L1229.82 338.14M919.87 761.85L1237.94 344.32M922.95 774.63L1246.05 350.50M933.49 777.63L1254.16 356.68M944.03 780.63L1262.28 362.86M947.11 793.41L1270.39 369.05M957.65 796.41L1278.51 375.23M968.19 799.41L1286.62 381.41M971.27 812.19L1294.73 387.59M981.81 815.19L1302.85 393.77M992.35 818.19L1310.96 399.95M995.43 830.98L1319.07 406.13M1005.97 833.97L1327.19 412.31M1016.51 836.97L1335.30 418.49M1027.04 839.97L1343.42 424.68M1030.13 852.76L1351.53 430.86M1040.67 855.76L1359.64 437.04M1051.20 858.76L1367.76 443.22M1054.29 871.54L1375.87 449.40M1064.83 874.54L1383.99 455.58M1075.36 877.54L1392.10 461.76" stroke="#6a3000" stroke-width="1.2" stroke-dasharray="7.3 5" fill="none"/><clipPath id="hc8"><polygon points="940.0,250.0 1085.3,250.0 1085.3,355.3 940.0,299.6"/></clipPath><polygon points="940.0,250.0 1085.3,250.0 1085.3,355.3 940.0,299.6" fill="#4a7c98"/><path clip-path="url(#hc8)" d="M872.07 319.64L989.28 165.77M875.15 332.42L997.39 171.95M885.69 335.42L1005.51 178.13M896.22 338.42L1013.62 184.31M906.76 341.42L1021.73 190.49M909.85 354.20L1029.85 196.68M920.38 357.20L1037.96 202.86M930.92 360.20L1046.08 209.04M934.01 372.98L1054.19 215.22M944.54 375.98L1062.30 221.40M955.08 378.98L1070.42 227.58M958.17 391.76L1078.53 233.76M968.70 394.76L1086.65 239.94M979.24 397.76L1094.76 246.12M982.33 410.55L1102.87 252.31M992.86 413.54L1110.99 258.49M1003.40 416.54L1119.10 264.67M1006.49 429.33L1127.21 270.85M1017.02 432.33L1135.33 277.03M1027.56 435.33L1143.44 283.21M1030.65 448.11L1151.56 289.39" stroke="#0070c0" stroke-width="1.2" stroke-dasharray="7.3 5" fill="none"/><clipPath id="hc9"><polygon points="940.0,299.6 1085.3,355.3 1085.3,393.3 940.0,341.8"/></clipPath><polygon points="940.0,299.6 1085.3,355.3 1085.3,393.3 940.0,341.8" fill="#4a4a92"/><path clip-path="url(#hc9)" d="M873.86 367.77L990.52 214.63M884.40 370.77L998.64 220.81M894.94 373.77L1006.75 226.99M898.02 386.55L1014.87 233.18M908.56 389.55L1022.98 239.36M919.10 392.55L1031.09 245.54M922.18 405.33L1039.21 251.72M932.72 408.33L1047.32 257.90M943.26 411.33L1055.43 264.08M946.34 424.12L1063.55 270.26M956.88 427.11L1071.66 276.44M967.42 430.11L1079.78 282.62M970.50 442.90L1087.89 288.80M981.04 445.90L1096.00 294.99M991.58 448.90L1104.12 301.17M994.66 461.68L1112.23 307.35M1005.20 464.68L1120.35 313.53M1015.74 467.68L1128.46 319.71M1018.82 480.46L1136.57 325.89M1029.36 483.46L1144.69 332.07" stroke="#0000a0" stroke-width="1.2" stroke-dasharray="7.3 5" fill="none"/><clipPath id="hc10"><polygon points="940.0,341.8 1085.3,393.3 1085.3,454.0 961.8,407.0"/></clipPath><polygon points="940.0,341.8 1085.3,393.3 1085.3,454.0 961.8,407.0" fill="#4a9452"/><path clip-path="url(#hc10)" d="M875.66 415.90L993.32 261.46M878.75 428.69L1001.43 267.64M889.28 431.69L1009.55 273.82M899.82 434.69L1017.66 280.00M902.91 447.47L1025.77 286.18M913.44 450.47L1033.89 292.36M923.98 453.47L1042.00 298.55M927.07 466.25L1050.12 304.73M937.60 469.25L1058.23 310.91M948.14 472.25L1066.34 317.09M951.23 485.03L1074.46 323.27M961.76 488.03L1082.57 329.45M972.30 491.03L1090.69 335.63M975.39 503.82L1098.80 341.81M985.92 506.82L1106.91 347.99M996.46 509.81L1115.03 354.17M999.55 522.60L1123.14 360.36M1010.08 525.60L1131.25 366.54M1020.62 528.60L1139.37 372.72M1023.70 541.38L1147.48 378.90M1034.24 544.38L1155.60 385.08" stroke="#00a000" stroke-width="1.2" stroke-dasharray="7.3 5" fill="none"/><clipPath id="hc11"><polygon points="961.8,407.0 1031.7,433.6 1006.7,432.5 961.8,426.7"/></clipPath><polygon points="961.8,407.0 1031.7,433.6 1006.7,432.5 961.8,426.7" fill="#b05050"/><path clip-path="url(#hc11)" d="M928.35 430.90L984.27 357.50M938.89 433.90L992.38 363.68M941.97 446.68L1000.50 369.86M952.51 449.68L1008.61 376.04M963.05 452.68L1016.73 382.22M966.13 465.47L1024.84 388.40M976.67 468.46L1032.95 394.58M987.21 471.46L1041.07 400.76M997.75 474.46L1049.18 406.95M1000.83 487.25L1057.29 413.13" stroke="#d00000" stroke-width="1.2" stroke-dasharray="7.3 5" fill="none"/><polyline points="961.8,426.7 1006.7,432.5 1031.7,433.6" fill="none" stroke="#e8e8e8" stroke-width="0.9" stroke-opacity="0.45" transform="translate(0,0.9)"/><polyline points="961.8,426.7 1006.7,432.5 1031.7,433.6" fill="none" stroke="#3c3c44" stroke-width="0.9" stroke-opacity="0.85"/><polyline points="940.0,299.6 1085.3,355.3" fill="none" stroke="#e8e8e8" stroke-width="0.9" stroke-opacity="0.45" transform="translate(0,0.9)"/><polyline points="940.0,299.6 1085.3,355.3" fill="none" stroke="#3c3c44" stroke-width="0.9" stroke-opacity="0.85"/><polyline points="940.0,341.8 1085.3,393.3" fill="none" stroke="#e8e8e8" stroke-width="0.9" stroke-opacity="0.45" transform="translate(0,0.9)"/><polyline points="940.0,341.8 1085.3,393.3" fill="none" stroke="#3c3c44" stroke-width="0.9" stroke-opacity="0.85"/><polyline points="961.8,407.0 1085.3,454.0" fill="none" stroke="#e8e8e8" stroke-width="0.9" stroke-opacity="0.45" transform="translate(0,0.9)"/><polyline points="961.8,407.0 1085.3,454.0" fill="none" stroke="#3c3c44" stroke-width="0.9" stroke-opacity="0.85"/><polyline points="961.8,715 1085.3,757.6 1085.3,300" fill="none" stroke="#111" stroke-width="1.3"/><line x1="961.8" y1="380" x2="961.8" y2="715" stroke="#000" stroke-opacity="0.12" stroke-width="1"/><defs><linearGradient id="tg0" gradientUnits="userSpaceOnUse" x1="700.5" y1="530.2" x2="453.5" y2="443.2"><stop offset="0.00" stop-color="#4f671d"/><stop offset="0.25" stop-color="#4f671d"/><stop offset="0.50" stop-color="#4f671d"/><stop offset="0.75" stop-color="#4f681d"/><stop offset="1.00" stop-color="#4f681e"/></linearGradient><linearGradient id="tg1" gradientUnits="userSpaceOnUse" x1="707.6" y1="525.4" x2="460.6" y2="438.4"><stop offset="0.00" stop-color="#4f681d"/><stop offset="0.25" stop-color="#4f681d"/><stop offset="0.50" stop-color="#4f681d"/><stop offset="0.75" stop-color="#4f681e"/><stop offset="1.00" stop-color="#50691e"/></linearGradient><linearGradient id="tg2" gradientUnits="userSpaceOnUse" x1="714.6" y1="520.6" x2="467.6" y2="433.6"><stop offset="0.00" stop-color="#4f681d"/><stop offset="0.25" stop-color="#4f681d"/><stop offset="0.50" stop-color="#4f681d"/><stop offset="0.75" stop-color="#4f681e"/><stop offset="1.00" stop-color="#506a1e"/></linearGradient><linearGradient id="tg3" gradientUnits="userSpaceOnUse" x1="721.7" y1="515.8" x2="474.7" y2="428.7"><stop offset="0.00" stop-color="#4f681e"/><stop offset="0.25" stop-color="#4f681e"/><stop offset="0.50" stop-color="#4f681e"/><stop offset="0.75" stop-color="#50691e"/><stop offset="1.00" stop-color="#516a1e"/></linearGradient><linearGradient id="tg4" gradientUnits="userSpaceOnUse" x1="728.8" y1="510.9" x2="481.8" y2="423.8"><stop offset="0.00" stop-color="#4f681e"/><stop offset="0.25" stop-color="#4f681e"/><stop offset="0.50" stop-color="#4f691e"/><stop offset="0.75" stop-color="#50691e"/><stop offset="1.00" stop-color="#516b1e"/></linearGradient><linearGradient id="tg5" gradientUnits="userSpaceOnUse" x1="735.8" y1="505.9" x2="488.8" y2="418.7"><stop offset="0.00" stop-color="#4f681e"/><stop offset="0.25" stop-color="#4f691e"/><stop offset="0.50" stop-color="#50691e"/><stop offset="0.75" stop-color="#506a1e"/><stop offset="1.00" stop-color="#526c1f"/></linearGradient><linearGradient id="tg6" gradientUnits="userSpaceOnUse" x1="742.9" y1="500.9" x2="495.9" y2="413.5"><stop offset="0.00" stop-color="#50691e"/><stop offset="0.25" stop-color="#50691e"/><stop offset="0.50" stop-color="#50691e"/><stop offset="0.75" stop-color="#516b1e"/><stop offset="1.00" stop-color="#536e1f"/></linearGradient><linearGradient id="tg7" gradientUnits="userSpaceOnUse" x1="750.0" y1="495.9" x2="503.0" y2="408.2"><stop offset="0.00" stop-color="#50691e"/><stop offset="0.25" stop-color="#50691e"/><stop offset="0.50" stop-color="#506a1e"/><stop offset="0.75" stop-color="#526c1e"/><stop offset="1.00" stop-color="#546f1f"/></linearGradient><linearGradient id="tg8" gradientUnits="userSpaceOnUse" x1="757.0" y1="490.9" x2="510.0" y2="402.9"><stop offset="0.00" stop-color="#50691e"/><stop offset="0.25" stop-color="#506a1e"/><stop offset="0.50" stop-color="#516a1e"/><stop offset="0.75" stop-color="#526d1f"/><stop offset="1.00" stop-color="#557020"/></linearGradient><linearGradient id="tg9" gradientUnits="userSpaceOnUse" x1="764.1" y1="485.9" x2="517.1" y2="397.5"><stop offset="0.00" stop-color="#50691e"/><stop offset="0.25" stop-color="#506a1e"/><stop offset="0.50" stop-color="#516b1e"/><stop offset="0.75" stop-color="#536e1f"/><stop offset="1.00" stop-color="#567220"/></linearGradient><linearGradient id="tg10" gradientUnits="userSpaceOnUse" x1="771.1" y1="480.9" x2="524.1" y2="392.2"><stop offset="0.00" stop-color="#506a1e"/><stop offset="0.25" stop-color="#516a1e"/><stop offset="0.50" stop-color="#526c1e"/><stop offset="0.75" stop-color="#546f1f"/><stop offset="1.00" stop-color="#577320"/></linearGradient><linearGradient id="tg11" gradientUnits="userSpaceOnUse" x1="778.2" y1="475.9" x2="531.2" y2="386.9"><stop offset="0.00" stop-color="#506a1e"/><stop offset="0.25" stop-color="#516b1e"/><stop offset="0.50" stop-color="#526d1f"/><stop offset="0.75" stop-color="#557020"/><stop offset="1.00" stop-color="#587521"/></linearGradient><linearGradient id="tg12" gradientUnits="userSpaceOnUse" x1="785.2" y1="470.8" x2="538.2" y2="381.6"><stop offset="0.00" stop-color="#506a1e"/><stop offset="0.25" stop-color="#516b1e"/><stop offset="0.50" stop-color="#536e1f"/><stop offset="0.75" stop-color="#567220"/><stop offset="1.00" stop-color="#597621"/></linearGradient><linearGradient id="tg13" gradientUnits="userSpaceOnUse" x1="792.3" y1="465.8" x2="545.3" y2="376.3"><stop offset="0.00" stop-color="#516a1e"/><stop offset="0.25" stop-color="#526c1e"/><stop offset="0.50" stop-color="#546f1f"/><stop offset="0.75" stop-color="#577320"/><stop offset="1.00" stop-color="#5a7721"/></linearGradient><linearGradient id="tg14" gradientUnits="userSpaceOnUse" x1="799.4" y1="460.8" x2="552.4" y2="371.0"><stop offset="0.00" stop-color="#516b1e"/><stop offset="0.25" stop-color="#526c1f"/><stop offset="0.50" stop-color="#55701f"/><stop offset="0.75" stop-color="#587421"/><stop offset="1.00" stop-color="#5a7821"/></linearGradient><linearGradient id="tg15" gradientUnits="userSpaceOnUse" x1="806.4" y1="455.8" x2="559.4" y2="365.7"><stop offset="0.00" stop-color="#516b1e"/><stop offset="0.25" stop-color="#536d1f"/><stop offset="0.50" stop-color="#557120"/><stop offset="0.75" stop-color="#597521"/><stop offset="1.00" stop-color="#5b7822"/></linearGradient><linearGradient id="tg16" gradientUnits="userSpaceOnUse" x1="813.5" y1="450.9" x2="566.5" y2="360.4"><stop offset="0.00" stop-color="#526c1e"/><stop offset="0.25" stop-color="#536e1f"/><stop offset="0.50" stop-color="#567220"/><stop offset="0.75" stop-color="#5a7721"/><stop offset="1.00" stop-color="#5b7922"/></linearGradient><linearGradient id="tg17" gradientUnits="userSpaceOnUse" x1="820.5" y1="445.9" x2="573.5" y2="355.0"><stop offset="0.00" stop-color="#526c1f"/><stop offset="0.25" stop-color="#546f1f"/><stop offset="0.50" stop-color="#577420"/><stop offset="0.75" stop-color="#5a7821"/><stop offset="1.00" stop-color="#5b7922"/></linearGradient><linearGradient id="tg18" gradientUnits="userSpaceOnUse" x1="827.6" y1="441.0" x2="580.6" y2="349.7"><stop offset="0.00" stop-color="#536d1f"/><stop offset="0.25" stop-color="#557020"/><stop offset="0.50" stop-color="#587521"/><stop offset="0.75" stop-color="#5b7822"/><stop offset="1.00" stop-color="#5b7922"/></linearGradient><linearGradient id="tg19" gradientUnits="userSpaceOnUse" x1="834.7" y1="436.1" x2="587.7" y2="344.4"><stop offset="0.00" stop-color="#536e1f"/><stop offset="0.25" stop-color="#567220"/><stop offset="0.50" stop-color="#597621"/><stop offset="0.75" stop-color="#5b7922"/><stop offset="1.00" stop-color="#5b7821"/></linearGradient><linearGradient id="tg20" gradientUnits="userSpaceOnUse" x1="841.7" y1="431.2" x2="594.7" y2="339.2"><stop offset="0.00" stop-color="#546f1f"/><stop offset="0.25" stop-color="#577320"/><stop offset="0.50" stop-color="#5a7721"/><stop offset="0.75" stop-color="#5b7922"/><stop offset="1.00" stop-color="#5a7721"/></linearGradient><linearGradient id="tg21" gradientUnits="userSpaceOnUse" x1="848.8" y1="426.4" x2="601.8" y2="334.1"><stop offset="0.00" stop-color="#55701f"/><stop offset="0.25" stop-color="#587421"/><stop offset="0.50" stop-color="#5a7821"/><stop offset="0.75" stop-color="#5b7922"/><stop offset="1.00" stop-color="#597621"/></linearGradient><linearGradient id="tg22" gradientUnits="userSpaceOnUse" x1="855.9" y1="421.6" x2="608.9" y2="329.1"><stop offset="0.00" stop-color="#557120"/><stop offset="0.25" stop-color="#597521"/><stop offset="0.50" stop-color="#5b7822"/><stop offset="0.75" stop-color="#5b7822"/><stop offset="1.00" stop-color="#587521"/></linearGradient><linearGradient id="tg23" gradientUnits="userSpaceOnUse" x1="862.9" y1="416.9" x2="615.9" y2="324.3"><stop offset="0.00" stop-color="#567220"/><stop offset="0.25" stop-color="#597621"/><stop offset="0.50" stop-color="#5b7922"/><stop offset="0.75" stop-color="#5a7721"/><stop offset="1.00" stop-color="#577320"/></linearGradient><linearGradient id="tg24" gradientUnits="userSpaceOnUse" x1="870.0" y1="412.2" x2="623.0" y2="319.5"><stop offset="0.00" stop-color="#577320"/><stop offset="0.25" stop-color="#5a7721"/><stop offset="0.50" stop-color="#5b7822"/><stop offset="0.75" stop-color="#597621"/><stop offset="1.00" stop-color="#567220"/></linearGradient><linearGradient id="tg25" gradientUnits="userSpaceOnUse" x1="877.0" y1="407.6" x2="630.0" y2="314.8"><stop offset="0.00" stop-color="#587421"/><stop offset="0.25" stop-color="#5a7821"/><stop offset="0.50" stop-color="#5b7821"/><stop offset="0.75" stop-color="#587521"/><stop offset="1.00" stop-color="#557120"/></linearGradient><linearGradient id="tg26" gradientUnits="userSpaceOnUse" x1="884.1" y1="403.0" x2="637.1" y2="310.2"><stop offset="0.00" stop-color="#597521"/><stop offset="0.25" stop-color="#5b7822"/><stop offset="0.50" stop-color="#5a7721"/><stop offset="0.75" stop-color="#577420"/><stop offset="1.00" stop-color="#546f1f"/></linearGradient><linearGradient id="tg27" gradientUnits="userSpaceOnUse" x1="891.1" y1="398.4" x2="644.1" y2="305.7"><stop offset="0.00" stop-color="#597621"/><stop offset="0.25" stop-color="#5b7822"/><stop offset="0.50" stop-color="#597621"/><stop offset="0.75" stop-color="#567220"/><stop offset="1.00" stop-color="#536e1f"/></linearGradient><linearGradient id="tg28" gradientUnits="userSpaceOnUse" x1="898.2" y1="393.9" x2="651.2" y2="301.4"><stop offset="0.00" stop-color="#5a7721"/><stop offset="0.25" stop-color="#5a7821"/><stop offset="0.50" stop-color="#597521"/><stop offset="0.75" stop-color="#557120"/><stop offset="1.00" stop-color="#536d1f"/></linearGradient><linearGradient id="tg29" gradientUnits="userSpaceOnUse" x1="905.3" y1="389.5" x2="658.3" y2="297.3"><stop offset="0.00" stop-color="#5a7821"/><stop offset="0.25" stop-color="#5a7721"/><stop offset="0.50" stop-color="#587420"/><stop offset="0.75" stop-color="#54701f"/><stop offset="1.00" stop-color="#526c1e"/></linearGradient><linearGradient id="tg30" gradientUnits="userSpaceOnUse" x1="912.3" y1="385.2" x2="665.3" y2="293.2"><stop offset="0.00" stop-color="#5a7821"/><stop offset="0.25" stop-color="#597621"/><stop offset="0.50" stop-color="#577220"/><stop offset="0.75" stop-color="#536e1f"/><stop offset="1.00" stop-color="#516b1e"/></linearGradient><linearGradient id="tg31" gradientUnits="userSpaceOnUse" x1="919.4" y1="380.8" x2="672.4" y2="289.3"><stop offset="0.00" stop-color="#5a7721"/><stop offset="0.25" stop-color="#587521"/><stop offset="0.50" stop-color="#557120"/><stop offset="0.75" stop-color="#526d1f"/><stop offset="1.00" stop-color="#506a1e"/></linearGradient><linearGradient id="tg32" gradientUnits="userSpaceOnUse" x1="926.5" y1="376.6" x2="679.5" y2="285.5"><stop offset="0.00" stop-color="#5a7721"/><stop offset="0.25" stop-color="#577420"/><stop offset="0.50" stop-color="#546f1f"/><stop offset="0.75" stop-color="#516b1e"/><stop offset="1.00" stop-color="#50691e"/></linearGradient><linearGradient id="tg33" gradientUnits="userSpaceOnUse" x1="933.5" y1="372.4" x2="686.5" y2="281.8"><stop offset="0.00" stop-color="#597621"/><stop offset="0.25" stop-color="#567220"/><stop offset="0.50" stop-color="#536e1f"/><stop offset="0.75" stop-color="#516a1e"/><stop offset="1.00" stop-color="#4f681e"/></linearGradient><linearGradient id="tg34" gradientUnits="userSpaceOnUse" x1="940.6" y1="368.2" x2="693.6" y2="278.3"><stop offset="0.00" stop-color="#587421"/><stop offset="0.25" stop-color="#557020"/><stop offset="0.50" stop-color="#526c1f"/><stop offset="0.75" stop-color="#50691e"/><stop offset="1.00" stop-color="#4f681d"/></linearGradient><linearGradient id="tg35" gradientUnits="userSpaceOnUse" x1="947.6" y1="364.2" x2="700.6" y2="274.9"><stop offset="0.00" stop-color="#577320"/><stop offset="0.25" stop-color="#546f1f"/><stop offset="0.50" stop-color="#516b1e"/><stop offset="0.75" stop-color="#4f681e"/><stop offset="1.00" stop-color="#4e671d"/></linearGradient><linearGradient id="tg36" gradientUnits="userSpaceOnUse" x1="954.7" y1="360.2" x2="707.7" y2="271.7"><stop offset="0.00" stop-color="#567220"/><stop offset="0.25" stop-color="#536d1f"/><stop offset="0.50" stop-color="#506a1e"/><stop offset="0.75" stop-color="#4f681d"/><stop offset="1.00" stop-color="#4e671d"/></linearGradient><linearGradient id="tg37" gradientUnits="userSpaceOnUse" x1="961.8" y1="356.3" x2="714.8" y2="268.6"><stop offset="0.00" stop-color="#55701f"/><stop offset="0.25" stop-color="#526c1e"/><stop offset="0.50" stop-color="#4f681e"/><stop offset="0.75" stop-color="#4e671d"/><stop offset="1.00" stop-color="#4e661d"/></linearGradient><linearGradient id="tg38" gradientUnits="userSpaceOnUse" x1="968.8" y1="352.4" x2="721.8" y2="265.7"><stop offset="0.00" stop-color="#546e1f"/><stop offset="0.25" stop-color="#516a1e"/><stop offset="0.50" stop-color="#4f681d"/><stop offset="0.75" stop-color="#4e661d"/><stop offset="1.00" stop-color="#4d661d"/></linearGradient><linearGradient id="tg39" gradientUnits="userSpaceOnUse" x1="975.9" y1="348.7" x2="728.9" y2="262.8"><stop offset="0.00" stop-color="#526d1f"/><stop offset="0.25" stop-color="#50691e"/><stop offset="0.50" stop-color="#4e671d"/><stop offset="0.75" stop-color="#4d661d"/><stop offset="1.00" stop-color="#4d651d"/></linearGradient><linearGradient id="tg40" gradientUnits="userSpaceOnUse" x1="982.9" y1="345.0" x2="735.9" y2="259.9"><stop offset="0.00" stop-color="#516b1e"/><stop offset="0.25" stop-color="#4f681d"/><stop offset="0.50" stop-color="#4d661d"/><stop offset="0.75" stop-color="#4d651d"/><stop offset="1.00" stop-color="#4d651d"/></linearGradient><linearGradient id="tg41" gradientUnits="userSpaceOnUse" x1="990.0" y1="341.4" x2="743.0" y2="257.1"><stop offset="0.00" stop-color="#50691e"/><stop offset="0.25" stop-color="#4e661d"/><stop offset="0.50" stop-color="#4d651d"/><stop offset="0.75" stop-color="#4c641d"/><stop offset="1.00" stop-color="#4c641d"/></linearGradient><linearGradient id="tg42" gradientUnits="userSpaceOnUse" x1="997.0" y1="337.9" x2="750.0" y2="254.4"><stop offset="0.00" stop-color="#4f681d"/><stop offset="0.25" stop-color="#4d651d"/><stop offset="0.50" stop-color="#4c641d"/><stop offset="0.75" stop-color="#4c641c"/><stop offset="1.00" stop-color="#4c641c"/></linearGradient><linearGradient id="tg43" gradientUnits="userSpaceOnUse" x1="1004.1" y1="334.4" x2="757.1" y2="251.6"><stop offset="0.00" stop-color="#4e661d"/><stop offset="0.25" stop-color="#4c641d"/><stop offset="0.50" stop-color="#4c631c"/><stop offset="0.75" stop-color="#4c631c"/><stop offset="1.00" stop-color="#4b631c"/></linearGradient><linearGradient id="tg44" gradientUnits="userSpaceOnUse" x1="1011.2" y1="331.1" x2="764.2" y2="248.9"><stop offset="0.00" stop-color="#4d651d"/><stop offset="0.25" stop-color="#4c631c"/><stop offset="0.50" stop-color="#4b631c"/><stop offset="0.75" stop-color="#4b631c"/><stop offset="1.00" stop-color="#4b631c"/></linearGradient><linearGradient id="tg45" gradientUnits="userSpaceOnUse" x1="1018.2" y1="327.8" x2="771.2" y2="246.1"><stop offset="0.00" stop-color="#4c641c"/><stop offset="0.25" stop-color="#4b631c"/><stop offset="0.50" stop-color="#4b621c"/><stop offset="0.75" stop-color="#4b621c"/><stop offset="1.00" stop-color="#4b621c"/></linearGradient><linearGradient id="tg46" gradientUnits="userSpaceOnUse" x1="1025.3" y1="324.7" x2="778.3" y2="243.3"><stop offset="0.00" stop-color="#4b631c"/><stop offset="0.25" stop-color="#4b621c"/><stop offset="0.50" stop-color="#4a611c"/><stop offset="0.75" stop-color="#4a611c"/><stop offset="1.00" stop-color="#4a611c"/></linearGradient><linearGradient id="tg47" gradientUnits="userSpaceOnUse" x1="1032.3" y1="321.6" x2="785.3" y2="240.5"><stop offset="0.00" stop-color="#4b621c"/><stop offset="0.25" stop-color="#4a611c"/><stop offset="0.50" stop-color="#4a611c"/><stop offset="0.75" stop-color="#4a611c"/><stop offset="1.00" stop-color="#4a611c"/></linearGradient><linearGradient id="tg48" gradientUnits="userSpaceOnUse" x1="1039.4" y1="318.6" x2="792.4" y2="237.7"><stop offset="0.00" stop-color="#4a611c"/><stop offset="0.25" stop-color="#49601c"/><stop offset="0.50" stop-color="#49601c"/><stop offset="0.75" stop-color="#49601c"/><stop offset="1.00" stop-color="#49601c"/></linearGradient><linearGradient id="tg49" gradientUnits="userSpaceOnUse" x1="1046.5" y1="315.7" x2="799.5" y2="234.9"><stop offset="0.00" stop-color="#49601b"/><stop offset="0.25" stop-color="#495f1b"/><stop offset="0.50" stop-color="#495f1b"/><stop offset="0.75" stop-color="#495f1b"/><stop offset="1.00" stop-color="#495f1b"/></linearGradient><linearGradient id="tg50" gradientUnits="userSpaceOnUse" x1="1053.5" y1="312.9" x2="806.5" y2="232.1"><stop offset="0.00" stop-color="#485f1b"/><stop offset="0.25" stop-color="#485f1b"/><stop offset="0.50" stop-color="#485f1b"/><stop offset="0.75" stop-color="#485f1b"/><stop offset="1.00" stop-color="#485f1b"/></linearGradient><linearGradient id="tg51" gradientUnits="userSpaceOnUse" x1="1060.6" y1="310.1" x2="813.6" y2="229.4"><stop offset="0.00" stop-color="#485e1b"/><stop offset="0.25" stop-color="#485e1b"/><stop offset="0.50" stop-color="#485e1b"/><stop offset="0.75" stop-color="#485e1b"/><stop offset="1.00" stop-color="#485e1b"/></linearGradient><linearGradient id="tg52" gradientUnits="userSpaceOnUse" x1="1067.7" y1="307.4" x2="820.7" y2="226.7"><stop offset="0.00" stop-color="#475d1b"/><stop offset="0.25" stop-color="#475d1b"/><stop offset="0.50" stop-color="#475d1b"/><stop offset="0.75" stop-color="#475d1b"/><stop offset="1.00" stop-color="#475d1b"/></linearGradient><linearGradient id="tg53" gradientUnits="userSpaceOnUse" x1="1074.7" y1="304.8" x2="827.7" y2="224.1"><stop offset="0.00" stop-color="#475d1b"/><stop offset="0.25" stop-color="#475c1b"/><stop offset="0.50" stop-color="#475c1b"/><stop offset="0.75" stop-color="#475c1b"/><stop offset="1.00" stop-color="#475c1b"/></linearGradient><linearGradient id="tg54" gradientUnits="userSpaceOnUse" x1="1081.8" y1="302.3" x2="834.8" y2="221.5"><stop offset="0.00" stop-color="#465c1a"/><stop offset="0.25" stop-color="#465c1a"/><stop offset="0.50" stop-color="#465c1a"/><stop offset="0.75" stop-color="#465c1a"/><stop offset="1.00" stop-color="#465c1a"/></linearGradient><linearGradient id="tg55" gradientUnits="userSpaceOnUse" x1="1088.8" y1="299.9" x2="841.8" y2="219.0"><stop offset="0.00" stop-color="#465b1a"/><stop offset="0.25" stop-color="#465b1a"/><stop offset="0.50" stop-color="#465b1a"/><stop offset="0.75" stop-color="#465b1a"/><stop offset="1.00" stop-color="#465b1a"/></linearGradient><linearGradient id="tg56" gradientUnits="userSpaceOnUse" x1="1095.9" y1="297.5" x2="848.9" y2="216.6"><stop offset="0.00" stop-color="#465b1a"/><stop offset="0.25" stop-color="#465b1a"/><stop offset="0.50" stop-color="#465b1a"/><stop offset="0.75" stop-color="#465b1a"/><stop offset="1.00" stop-color="#465b1a"/></linearGradient><linearGradient id="tg57" gradientUnits="userSpaceOnUse" x1="1103.0" y1="295.2" x2="856.0" y2="214.2"><stop offset="0.00" stop-color="#455b1a"/><stop offset="0.25" stop-color="#455b1a"/><stop offset="0.50" stop-color="#455b1a"/><stop offset="0.75" stop-color="#455b1a"/><stop offset="1.00" stop-color="#455b1a"/></linearGradient><linearGradient id="tg58" gradientUnits="userSpaceOnUse" x1="1110.0" y1="292.9" x2="863.0" y2="211.8"><stop offset="0.00" stop-color="#455a1a"/><stop offset="0.25" stop-color="#455a1a"/><stop offset="0.50" stop-color="#455a1a"/><stop offset="0.75" stop-color="#455a1a"/><stop offset="1.00" stop-color="#455a1a"/></linearGradient><linearGradient id="tg59" gradientUnits="userSpaceOnUse" x1="1117.1" y1="290.7" x2="870.1" y2="209.5"><stop offset="0.00" stop-color="#455a1a"/><stop offset="0.25" stop-color="#455a1a"/><stop offset="0.50" stop-color="#455a1a"/><stop offset="0.75" stop-color="#455a1a"/><stop offset="1.00" stop-color="#455a1a"/></linearGradient><linearGradient id="tg60" gradientUnits="userSpaceOnUse" x1="1124.1" y1="288.4" x2="877.1" y2="207.2"><stop offset="0.00" stop-color="#44591a"/><stop offset="0.25" stop-color="#44591a"/><stop offset="0.50" stop-color="#44591a"/><stop offset="0.75" stop-color="#44591a"/><stop offset="1.00" stop-color="#44591a"/></linearGradient><linearGradient id="tg61" gradientUnits="userSpaceOnUse" x1="1131.2" y1="286.2" x2="884.2" y2="205.0"><stop offset="0.00" stop-color="#44591a"/><stop offset="0.25" stop-color="#44591a"/><stop offset="0.50" stop-color="#44591a"/><stop offset="0.75" stop-color="#44591a"/><stop offset="1.00" stop-color="#44591a"/></linearGradient><linearGradient id="tg62" gradientUnits="userSpaceOnUse" x1="1138.2" y1="284.1" x2="891.2" y2="202.7"><stop offset="0.00" stop-color="#44591a"/><stop offset="0.25" stop-color="#44591a"/><stop offset="0.50" stop-color="#44591a"/><stop offset="0.75" stop-color="#44591a"/><stop offset="1.00" stop-color="#44591a"/></linearGradient><linearGradient id="tg63" gradientUnits="userSpaceOnUse" x1="1145.3" y1="281.9" x2="898.3" y2="200.5"><stop offset="0.00" stop-color="#44581a"/><stop offset="0.25" stop-color="#44581a"/><stop offset="0.50" stop-color="#44581a"/><stop offset="0.75" stop-color="#44581a"/><stop offset="1.00" stop-color="#44581a"/></linearGradient><linearGradient id="tg64" gradientUnits="userSpaceOnUse" x1="1152.4" y1="279.8" x2="905.4" y2="198.3"><stop offset="0.00" stop-color="#435819"/><stop offset="0.25" stop-color="#435819"/><stop offset="0.50" stop-color="#435819"/><stop offset="0.75" stop-color="#435819"/><stop offset="1.00" stop-color="#435819"/></linearGradient><linearGradient id="tg65" gradientUnits="userSpaceOnUse" x1="1159.4" y1="277.7" x2="912.4" y2="196.1"><stop offset="0.00" stop-color="#435819"/><stop offset="0.25" stop-color="#435819"/><stop offset="0.50" stop-color="#435819"/><stop offset="0.75" stop-color="#435819"/><stop offset="1.00" stop-color="#435819"/></linearGradient><linearGradient id="tg66" gradientUnits="userSpaceOnUse" x1="1166.5" y1="275.6" x2="919.5" y2="193.9"><stop offset="0.00" stop-color="#435819"/><stop offset="0.25" stop-color="#435819"/><stop offset="0.50" stop-color="#435819"/><stop offset="0.75" stop-color="#435819"/><stop offset="1.00" stop-color="#435819"/></linearGradient><linearGradient id="tg67" gradientUnits="userSpaceOnUse" x1="1173.5" y1="273.5" x2="926.5" y2="191.7"><stop offset="0.00" stop-color="#435819"/><stop offset="0.25" stop-color="#435819"/><stop offset="0.50" stop-color="#435819"/><stop offset="0.75" stop-color="#435819"/><stop offset="1.00" stop-color="#435819"/></linearGradient><linearGradient id="tg68" gradientUnits="userSpaceOnUse" x1="1180.6" y1="271.4" x2="933.6" y2="189.4"><stop offset="0.00" stop-color="#435819"/><stop offset="0.25" stop-color="#435819"/><stop offset="0.50" stop-color="#435819"/><stop offset="0.75" stop-color="#435819"/><stop offset="1.00" stop-color="#435819"/></linearGradient><linearGradient id="tg69" gradientUnits="userSpaceOnUse" x1="1187.7" y1="269.3" x2="940.7" y2="187.2"><stop offset="0.00" stop-color="#435819"/><stop offset="0.25" stop-color="#435819"/><stop offset="0.50" stop-color="#435819"/><stop offset="0.75" stop-color="#435819"/><stop offset="1.00" stop-color="#435819"/></linearGradient><linearGradient id="tg70" gradientUnits="userSpaceOnUse" x1="1194.7" y1="267.2" x2="947.7" y2="184.9"><stop offset="0.00" stop-color="#435819"/><stop offset="0.25" stop-color="#435819"/><stop offset="0.50" stop-color="#435819"/><stop offset="0.75" stop-color="#435819"/><stop offset="1.00" stop-color="#435819"/></linearGradient><linearGradient id="tg71" gradientUnits="userSpaceOnUse" x1="1201.8" y1="265.2" x2="954.8" y2="182.6"><stop offset="0.00" stop-color="#435719"/><stop offset="0.25" stop-color="#435719"/><stop offset="0.50" stop-color="#435719"/><stop offset="0.75" stop-color="#435719"/><stop offset="1.00" stop-color="#435719"/></linearGradient><linearGradient id="tg72" gradientUnits="userSpaceOnUse" x1="1208.8" y1="263.1" x2="961.8" y2="180.2"><stop offset="0.00" stop-color="#435719"/><stop offset="0.25" stop-color="#435719"/><stop offset="0.50" stop-color="#435719"/><stop offset="0.75" stop-color="#435719"/><stop offset="1.00" stop-color="#435719"/></linearGradient><linearGradient id="tg73" gradientUnits="userSpaceOnUse" x1="1215.9" y1="261.0" x2="968.9" y2="177.9"><stop offset="0.00" stop-color="#435719"/><stop offset="0.25" stop-color="#435719"/><stop offset="0.50" stop-color="#435719"/><stop offset="0.75" stop-color="#435719"/><stop offset="1.00" stop-color="#435719"/></linearGradient><linearGradient id="tg74" gradientUnits="userSpaceOnUse" x1="1223.0" y1="258.9" x2="976.0" y2="175.5"><stop offset="0.00" stop-color="#435719"/><stop offset="0.25" stop-color="#435719"/><stop offset="0.50" stop-color="#435719"/><stop offset="0.75" stop-color="#435719"/><stop offset="1.00" stop-color="#435719"/></linearGradient><linearGradient id="tg75" gradientUnits="userSpaceOnUse" x1="1230.0" y1="256.8" x2="983.0" y2="173.1"><stop offset="0.00" stop-color="#435719"/><stop offset="0.25" stop-color="#435719"/><stop offset="0.50" stop-color="#435719"/><stop offset="0.75" stop-color="#435719"/><stop offset="1.00" stop-color="#435719"/></linearGradient><linearGradient id="tg76" gradientUnits="userSpaceOnUse" x1="1237.1" y1="254.6" x2="990.1" y2="170.7"><stop offset="0.00" stop-color="#435719"/><stop offset="0.25" stop-color="#435719"/><stop offset="0.50" stop-color="#435719"/><stop offset="0.75" stop-color="#435719"/><stop offset="1.00" stop-color="#435719"/></linearGradient><linearGradient id="tg77" gradientUnits="userSpaceOnUse" x1="1244.2" y1="252.5" x2="997.2" y2="168.3"><stop offset="0.00" stop-color="#435719"/><stop offset="0.25" stop-color="#435719"/><stop offset="0.50" stop-color="#435719"/><stop offset="0.75" stop-color="#435719"/><stop offset="1.00" stop-color="#435719"/></linearGradient><linearGradient id="tg78" gradientUnits="userSpaceOnUse" x1="1251.2" y1="250.3" x2="1004.2" y2="165.9"><stop offset="0.00" stop-color="#435719"/><stop offset="0.25" stop-color="#435719"/><stop offset="0.50" stop-color="#435719"/><stop offset="0.75" stop-color="#435719"/><stop offset="1.00" stop-color="#435719"/></linearGradient><linearGradient id="tg79" gradientUnits="userSpaceOnUse" x1="1258.3" y1="248.1" x2="1011.3" y2="163.5"><stop offset="0.00" stop-color="#435719"/><stop offset="0.25" stop-color="#435719"/><stop offset="0.50" stop-color="#435719"/><stop offset="0.75" stop-color="#435719"/><stop offset="1.00" stop-color="#435719"/></linearGradient><linearGradient id="tg80" gradientUnits="userSpaceOnUse" x1="1265.3" y1="245.9" x2="1018.3" y2="161.1"><stop offset="0.00" stop-color="#435719"/><stop offset="0.25" stop-color="#435719"/><stop offset="0.50" stop-color="#435719"/><stop offset="0.75" stop-color="#435719"/><stop offset="1.00" stop-color="#435719"/></linearGradient><linearGradient id="tg81" gradientUnits="userSpaceOnUse" x1="1272.4" y1="243.8" x2="1025.4" y2="158.7"><stop offset="0.00" stop-color="#435719"/><stop offset="0.25" stop-color="#435719"/><stop offset="0.50" stop-color="#435719"/><stop offset="0.75" stop-color="#435719"/><stop offset="1.00" stop-color="#435719"/></linearGradient><linearGradient id="tg82" gradientUnits="userSpaceOnUse" x1="1279.4" y1="241.6" x2="1032.4" y2="156.2"><stop offset="0.00" stop-color="#435719"/><stop offset="0.25" stop-color="#435719"/><stop offset="0.50" stop-color="#435719"/><stop offset="0.75" stop-color="#435719"/><stop offset="1.00" stop-color="#435719"/></linearGradient><linearGradient id="tg83" gradientUnits="userSpaceOnUse" x1="1286.5" y1="239.4" x2="1039.5" y2="153.8"><stop offset="0.00" stop-color="#435719"/><stop offset="0.25" stop-color="#435719"/><stop offset="0.50" stop-color="#435719"/><stop offset="0.75" stop-color="#435719"/><stop offset="1.00" stop-color="#435719"/></linearGradient><linearGradient id="tg84" gradientUnits="userSpaceOnUse" x1="1293.6" y1="237.3" x2="1046.6" y2="151.4"><stop offset="0.00" stop-color="#435719"/><stop offset="0.25" stop-color="#435719"/><stop offset="0.50" stop-color="#435719"/><stop offset="0.75" stop-color="#435719"/><stop offset="1.00" stop-color="#435719"/></linearGradient><linearGradient id="tg85" gradientUnits="userSpaceOnUse" x1="1300.6" y1="235.1" x2="1053.6" y2="149.0"><stop offset="0.00" stop-color="#435719"/><stop offset="0.25" stop-color="#435719"/><stop offset="0.50" stop-color="#435719"/><stop offset="0.75" stop-color="#435719"/><stop offset="1.00" stop-color="#435719"/></linearGradient><linearGradient id="tg86" gradientUnits="userSpaceOnUse" x1="1307.7" y1="232.9" x2="1060.7" y2="146.6"><stop offset="0.00" stop-color="#435719"/><stop offset="0.25" stop-color="#435719"/><stop offset="0.50" stop-color="#435719"/><stop offset="0.75" stop-color="#435719"/><stop offset="1.00" stop-color="#435719"/></linearGradient><linearGradient id="tg87" gradientUnits="userSpaceOnUse" x1="1314.8" y1="230.7" x2="1067.8" y2="144.2"><stop offset="0.00" stop-color="#425719"/><stop offset="0.25" stop-color="#425719"/><stop offset="0.50" stop-color="#425719"/><stop offset="0.75" stop-color="#425719"/><stop offset="1.00" stop-color="#425719"/></linearGradient><linearGradient id="tg88" gradientUnits="userSpaceOnUse" x1="1321.8" y1="228.6" x2="1074.8" y2="141.8"><stop offset="0.00" stop-color="#425719"/><stop offset="0.25" stop-color="#425719"/><stop offset="0.50" stop-color="#425719"/><stop offset="0.75" stop-color="#425719"/><stop offset="1.00" stop-color="#425719"/></linearGradient><linearGradient id="tg89" gradientUnits="userSpaceOnUse" x1="1328.9" y1="226.4" x2="1081.9" y2="139.4"><stop offset="0.00" stop-color="#425719"/><stop offset="0.25" stop-color="#425719"/><stop offset="0.50" stop-color="#425719"/><stop offset="0.75" stop-color="#425719"/><stop offset="1.00" stop-color="#425719"/></linearGradient><linearGradient id="tg90" gradientUnits="userSpaceOnUse" x1="1335.9" y1="224.2" x2="1088.9" y2="137.0"><stop offset="0.00" stop-color="#425619"/><stop offset="0.25" stop-color="#425619"/><stop offset="0.50" stop-color="#425619"/><stop offset="0.75" stop-color="#425619"/><stop offset="1.00" stop-color="#425619"/></linearGradient><linearGradient id="tg91" gradientUnits="userSpaceOnUse" x1="1343.0" y1="222.0" x2="1096.0" y2="134.6"><stop offset="0.00" stop-color="#425619"/><stop offset="0.25" stop-color="#425619"/><stop offset="0.50" stop-color="#425619"/><stop offset="0.75" stop-color="#425619"/><stop offset="1.00" stop-color="#425619"/></linearGradient><linearGradient id="tg92" gradientUnits="userSpaceOnUse" x1="1350.0" y1="219.9" x2="1103.0" y2="132.2"><stop offset="0.00" stop-color="#425619"/><stop offset="0.25" stop-color="#425619"/><stop offset="0.50" stop-color="#425619"/><stop offset="0.75" stop-color="#425619"/><stop offset="1.00" stop-color="#425619"/></linearGradient><linearGradient id="tg93" gradientUnits="userSpaceOnUse" x1="1357.1" y1="217.7" x2="1110.1" y2="129.9"><stop offset="0.00" stop-color="#425619"/><stop offset="0.25" stop-color="#425619"/><stop offset="0.50" stop-color="#425619"/><stop offset="0.75" stop-color="#425619"/><stop offset="1.00" stop-color="#425619"/></linearGradient><linearGradient id="tg94" gradientUnits="userSpaceOnUse" x1="1364.2" y1="215.5" x2="1117.2" y2="127.5"><stop offset="0.00" stop-color="#425619"/><stop offset="0.25" stop-color="#425619"/><stop offset="0.50" stop-color="#425619"/><stop offset="0.75" stop-color="#425619"/><stop offset="1.00" stop-color="#425619"/></linearGradient><linearGradient id="tg95" gradientUnits="userSpaceOnUse" x1="1371.2" y1="213.3" x2="1124.2" y2="125.1"><stop offset="0.00" stop-color="#425619"/><stop offset="0.25" stop-color="#425619"/><stop offset="0.50" stop-color="#425619"/><stop offset="0.75" stop-color="#425619"/><stop offset="1.00" stop-color="#425619"/></linearGradient><linearGradient id="tg96" gradientUnits="userSpaceOnUse" x1="1378.3" y1="211.1" x2="1131.3" y2="122.8"><stop offset="0.00" stop-color="#425619"/><stop offset="0.25" stop-color="#425619"/><stop offset="0.50" stop-color="#425619"/><stop offset="0.75" stop-color="#425619"/><stop offset="1.00" stop-color="#425619"/></linearGradient><linearGradient id="tg97" gradientUnits="userSpaceOnUse" x1="1385.3" y1="209.0" x2="1138.3" y2="120.4"><stop offset="0.00" stop-color="#425619"/><stop offset="0.25" stop-color="#425619"/><stop offset="0.50" stop-color="#425619"/><stop offset="0.75" stop-color="#425619"/><stop offset="1.00" stop-color="#425619"/></linearGradient><linearGradient id="tg98" gradientUnits="userSpaceOnUse" x1="1392.4" y1="206.8" x2="1145.4" y2="118.0"><stop offset="0.00" stop-color="#425619"/><stop offset="0.25" stop-color="#425619"/><stop offset="0.50" stop-color="#425619"/><stop offset="0.75" stop-color="#425619"/><stop offset="1.00" stop-color="#425619"/></linearGradient><linearGradient id="tg99" gradientUnits="userSpaceOnUse" x1="1399.5" y1="204.6" x2="1152.5" y2="115.7"><stop offset="0.00" stop-color="#425619"/><stop offset="0.25" stop-color="#425619"/><stop offset="0.50" stop-color="#425619"/><stop offset="0.75" stop-color="#425619"/><stop offset="1.00" stop-color="#425619"/></linearGradient></defs><polygon points="697.0,532.6 705.8,526.6 714.6,520.6 723.5,514.5 732.3,508.4 741.1,502.2 750.0,495.9 758.8,489.6 767.6,483.4 776.4,477.1 785.2,470.8 794.1,464.6 802.9,458.3 811.7,452.1 820.5,445.9 829.4,439.8 838.2,433.7 847.0,427.6 855.9,421.6 864.7,415.7 873.5,409.9 882.3,404.1 891.1,398.4 900.0,392.8 908.8,387.3 917.6,381.9 926.5,376.6 935.3,371.3 944.1,366.2 952.9,361.2 961.8,356.3 970.6,351.5 979.4,346.8 988.2,342.3 997.0,337.9 1005.9,333.6 1014.7,329.5 1023.5,325.5 1032.3,321.6 1041.2,317.9 1050.0,314.3 1058.8,310.8 1067.7,307.4 1076.5,304.2 1085.3,301.1 1094.1,298.1 1103.0,295.2 1111.8,292.3 1120.6,289.5 1129.4,286.8 1138.2,284.1 1147.1,281.4 1155.9,278.7 1164.7,276.1 1173.5,273.5 1182.4,270.9 1191.2,268.3 1200.0,265.7 1208.8,263.1 1217.7,260.5 1226.5,257.8 1235.3,255.1 1244.2,252.5 1253.0,249.7 1261.8,247.0 1270.6,244.3 1279.4,241.6 1288.3,238.9 1297.1,236.2 1305.9,233.5 1314.8,230.7 1323.6,228.0 1332.4,225.3 1341.2,222.6 1350.0,219.9 1358.9,217.1 1367.7,214.4 1376.5,211.7 1385.3,209.0 1394.2,206.2 1403.0,203.5 1403.0,203.5 1378.3,194.6 1353.6,185.7 1328.9,176.8 1304.2,167.9 1279.5,159.0 1254.8,150.1 1230.1,141.2 1205.4,132.3 1180.7,123.4 1156.0,114.5 1156.0,114.5 1147.2,117.4 1138.3,120.4 1129.5,123.4 1120.7,126.3 1111.9,129.3 1103.0,132.2 1094.2,135.2 1085.4,138.2 1076.6,141.2 1067.8,144.2 1058.9,147.2 1050.1,150.2 1041.3,153.2 1032.4,156.2 1023.6,159.3 1014.8,162.3 1006.0,165.3 997.2,168.3 988.3,171.3 979.5,174.3 970.7,177.3 961.8,180.2 953.0,183.2 944.2,186.0 935.4,188.9 926.5,191.7 917.7,194.4 908.9,197.2 900.1,200.0 891.2,202.7 882.4,205.5 873.6,208.3 864.8,211.2 856.0,214.2 847.1,217.2 838.3,220.2 829.5,223.4 820.7,226.7 811.8,230.1 803.0,233.5 794.2,237.0 785.3,240.5 776.5,244.0 767.7,247.5 758.9,250.9 750.0,254.4 741.2,257.8 732.4,261.3 723.6,264.9 714.8,268.6 705.9,272.5 697.1,276.6 688.3,280.9 679.5,285.5 670.6,290.2 661.8,295.2 653.0,300.4 644.1,305.7 635.3,311.4 626.5,317.2 617.7,323.1 608.9,329.1 600.0,335.4 591.2,341.8 582.4,348.3 573.5,355.0 564.7,361.7 555.9,368.4 547.1,375.0 538.2,381.6 529.4,388.2 520.6,394.8 511.8,401.5 503.0,408.2 494.1,414.8 485.3,421.2 476.5,427.5 467.6,433.6 458.8,439.6 450.0,445.5 450.0,445.5 474.7,454.2 499.4,462.9 524.1,471.6 548.8,480.3 573.5,489.1 598.2,497.8 622.9,506.5 647.6,515.2 672.3,523.9 697.0,532.6" fill="#4a6020" /><polygon points="697.0,532.6 705.5,526.9 643.7,505.1 582.0,483.4 520.2,461.6 458.5,439.9 450.0,445.5 511.8,467.3 573.5,489.1 635.2,510.8" fill="url(#tg0)" /><polygon points="703.7,528.1 712.5,522.1 650.8,500.3 589.0,478.6 527.3,456.8 465.5,435.1 456.7,441.1 518.5,462.8 580.2,484.6 642.0,506.3" fill="url(#tg1)" /><polygon points="710.8,523.3 719.6,517.2 657.8,495.5 596.1,473.7 534.3,452.0 472.6,430.2 463.8,436.3 525.5,458.0 587.3,479.8 649.0,501.5" fill="url(#tg2)" /><polygon points="717.8,518.4 726.7,512.3 664.9,490.6 603.2,468.8 541.4,447.0 479.7,425.3 470.8,431.4 532.6,453.2 594.3,474.9 656.1,496.7" fill="url(#tg3)" /><polygon points="724.9,513.6 733.7,507.4 672.0,485.6 610.2,463.8 548.5,442.0 486.7,420.2 477.9,426.5 539.6,448.3 601.4,470.0 663.1,491.8" fill="url(#tg4)" /><polygon points="731.9,508.6 740.8,502.4 679.0,480.6 617.3,458.8 555.5,436.9 493.8,415.1 484.9,421.5 546.7,443.3 608.4,465.1 670.2,486.9" fill="url(#tg5)" /><polygon points="739.0,503.7 747.8,497.4 686.1,475.5 624.3,453.6 562.6,431.7 500.8,409.8 492.0,416.4 553.8,438.2 615.5,460.0 677.3,481.9" fill="url(#tg6)" /><polygon points="746.1,498.7 754.9,492.4 693.1,470.4 631.4,448.4 569.6,426.4 507.9,404.5 499.1,411.1 560.8,433.0 622.6,454.9 684.3,476.8" fill="url(#tg7)" /><polygon points="753.1,493.7 762.0,487.4 700.2,465.3 638.5,443.2 576.7,421.2 515.0,399.1 506.1,405.8 567.9,427.8 629.6,449.7 691.4,471.7" fill="url(#tg8)" /><polygon points="760.2,488.6 769.0,482.4 707.3,460.2 645.5,438.1 583.8,415.9 522.0,393.8 513.2,400.4 574.9,422.5 636.7,444.5 698.4,466.6" fill="url(#tg9)" /><polygon points="767.2,483.6 776.1,477.4 714.3,455.1 652.6,432.9 590.8,410.7 529.1,388.5 520.2,395.1 582.0,417.2 643.7,439.4 705.5,461.5" fill="url(#tg10)" /><polygon points="774.3,478.6 783.1,472.3 721.4,450.1 659.6,427.8 597.9,405.5 536.1,383.2 527.3,389.8 589.1,412.0 650.8,434.2 712.6,456.4" fill="url(#tg11)" /><polygon points="781.4,473.6 790.2,467.3 728.4,445.0 666.7,422.6 604.9,400.2 543.2,377.9 534.4,384.5 596.1,406.8 657.9,429.1 719.6,451.3" fill="url(#tg12)" /><polygon points="788.4,468.6 797.3,462.3 735.5,439.9 673.8,417.5 612.0,395.0 550.3,372.6 541.4,379.2 603.2,401.6 664.9,423.9 726.7,446.2" fill="url(#tg13)" /><polygon points="795.5,463.6 804.3,457.3 742.6,434.8 680.8,412.3 619.1,389.8 557.3,367.3 548.5,373.9 610.2,396.3 672.0,418.7 733.7,441.2" fill="url(#tg14)" /><polygon points="802.5,458.6 811.4,452.4 749.6,429.8 687.9,407.2 626.1,384.6 564.4,362.0 555.5,368.6 617.3,391.1 679.0,413.6 740.8,436.1" fill="url(#tg15)" /><polygon points="809.6,453.6 818.4,447.4 756.7,424.7 694.9,402.0 633.2,379.3 571.4,356.6 562.6,363.3 624.4,385.9 686.1,408.4 747.9,431.0" fill="url(#tg16)" /><polygon points="816.7,448.6 825.5,442.5 763.7,419.7 702.0,396.9 640.2,374.1 578.5,351.3 569.7,357.9 631.4,380.6 693.2,403.3 754.9,426.0" fill="url(#tg17)" /><polygon points="823.7,443.7 832.6,437.6 770.8,414.7 709.1,391.8 647.3,368.9 585.6,346.0 576.7,352.6 638.5,375.4 700.2,398.2 762.0,420.9" fill="url(#tg18)" /><polygon points="830.8,438.8 839.6,432.7 777.9,409.7 716.1,386.7 654.4,363.7 592.6,340.8 583.8,347.3 645.5,370.2 707.3,393.0 769.0,415.9" fill="url(#tg19)" /><polygon points="837.8,433.9 846.7,427.8 784.9,404.8 723.2,381.7 661.4,358.7 599.7,335.6 590.8,342.1 652.6,365.0 714.3,388.0 776.1,410.9" fill="url(#tg20)" /><polygon points="844.9,429.0 853.7,423.0 792.0,399.9 730.2,376.8 668.5,353.7 606.7,330.6 597.9,336.9 659.7,359.9 721.4,383.0 783.2,406.0" fill="url(#tg21)" /><polygon points="852.0,424.2 860.8,418.3 799.0,395.1 737.3,372.0 675.5,348.9 613.8,325.7 605.0,331.8 666.7,354.9 728.5,378.0 790.2,401.1" fill="url(#tg22)" /><polygon points="859.0,419.4 867.9,413.6 806.1,390.4 744.4,367.3 682.6,344.1 620.9,320.9 612.0,326.9 673.8,350.1 735.5,373.2 797.3,396.3" fill="url(#tg23)" /><polygon points="866.1,414.8 874.9,409.0 813.2,385.8 751.4,362.6 689.7,339.4 627.9,316.2 619.1,322.1 680.8,345.3 742.6,368.4 804.3,391.6" fill="url(#tg24)" /><polygon points="873.1,410.1 882.0,404.4 820.2,381.2 758.5,358.0 696.7,334.8 635.0,311.6 626.1,317.4 687.9,340.6 749.6,363.8 811.4,386.9" fill="url(#tg25)" /><polygon points="880.2,405.5 889.0,399.8 827.3,376.6 765.5,353.4 703.8,330.3 642.0,307.1 633.2,312.7 695.0,335.9 756.7,359.1 818.5,382.3" fill="url(#tg26)" /><polygon points="887.3,400.9 896.1,395.3 834.3,372.1 772.6,349.0 710.8,325.8 649.1,302.7 640.3,308.2 702.0,331.4 763.8,354.6 825.5,377.7" fill="url(#tg27)" /><polygon points="894.3,396.4 903.2,390.8 841.4,367.8 779.7,344.7 717.9,321.6 656.2,298.5 647.3,303.8 709.1,326.9 770.8,350.1 832.6,373.2" fill="url(#tg28)" /><polygon points="901.4,391.9 910.2,386.5 848.5,363.4 786.7,340.4 725.0,317.4 663.2,294.4 654.4,299.5 716.1,322.6 777.9,345.7 839.6,368.8" fill="url(#tg29)" /><polygon points="908.4,387.5 917.3,382.1 855.5,359.2 793.8,336.3 732.0,313.4 670.3,290.4 661.4,295.4 723.2,318.5 784.9,341.5 846.7,364.5" fill="url(#tg30)" /><polygon points="915.5,383.2 924.3,377.8 862.6,355.0 800.8,332.2 739.1,309.4 677.3,286.6 668.5,291.4 730.3,314.4 792.0,337.3 853.8,360.3" fill="url(#tg31)" /><polygon points="922.6,378.9 931.4,373.6 869.6,350.9 807.9,328.2 746.1,305.6 684.4,282.9 675.6,287.5 737.3,310.4 799.1,333.2 860.8,356.1" fill="url(#tg32)" /><polygon points="929.6,374.7 938.5,369.5 876.7,346.9 815.0,324.4 753.2,301.8 691.5,279.3 682.6,283.8 744.4,306.5 806.1,329.2 867.9,351.9" fill="url(#tg33)" /><polygon points="936.7,370.5 945.5,365.4 883.8,343.0 822.0,320.6 760.3,298.3 698.5,275.9 689.7,280.2 751.4,302.8 813.2,325.3 874.9,347.9" fill="url(#tg34)" /><polygon points="943.7,366.4 952.6,361.4 890.8,339.2 829.1,317.0 767.3,294.9 705.6,272.7 696.7,276.7 758.5,299.2 820.2,321.6 882.0,344.0" fill="url(#tg35)" /><polygon points="950.8,362.4 959.6,357.4 897.9,335.5 836.1,313.5 774.4,291.5 712.6,269.6 703.8,273.5 765.6,295.7 827.3,317.9 889.1,340.1" fill="url(#tg36)" /><polygon points="957.9,358.4 966.7,353.6 904.9,331.8 843.2,310.1 781.4,288.3 719.7,266.5 710.9,270.3 772.6,292.4 834.4,314.4 896.1,336.4" fill="url(#tg37)" /><polygon points="964.9,354.5 973.8,349.8 912.0,328.3 850.3,306.7 788.5,285.2 726.8,263.6 717.9,267.3 779.7,289.1 841.4,310.9 903.2,332.7" fill="url(#tg38)" /><polygon points="972.0,350.7 980.8,346.1 919.1,324.8 857.3,303.4 795.6,282.1 733.8,260.8 725.0,264.3 786.7,285.9 848.5,307.5 910.2,329.1" fill="url(#tg39)" /><polygon points="979.0,347.0 987.9,342.5 926.1,321.3 864.4,300.2 802.6,279.1 740.9,258.0 732.0,261.5 793.8,282.9 855.5,304.3 917.3,325.6" fill="url(#tg40)" /><polygon points="986.1,343.4 994.9,338.9 933.2,318.0 871.4,297.1 809.7,276.1 747.9,255.2 739.1,258.7 800.9,279.8 862.6,301.0 924.4,322.2" fill="url(#tg41)" /><polygon points="993.2,339.8 1002.0,335.5 940.2,314.7 878.5,294.0 816.7,273.2 755.0,252.4 746.2,255.9 807.9,276.9 869.7,297.8 931.4,318.8" fill="url(#tg42)" /><polygon points="1000.2,336.3 1009.1,332.1 947.3,311.5 885.6,290.9 823.8,270.3 762.1,249.7 753.2,253.1 815.0,273.9 876.7,294.7 938.5,315.5" fill="url(#tg43)" /><polygon points="1007.3,332.9 1016.1,328.8 954.4,308.3 892.6,287.9 830.9,267.4 769.1,246.9 760.3,250.4 822.0,271.0 883.8,291.7 945.5,312.3" fill="url(#tg44)" /><polygon points="1014.3,329.6 1023.2,325.6 961.4,305.2 899.7,284.9 837.9,264.5 776.2,244.1 767.3,247.6 829.1,268.1 890.8,288.6 952.6,309.1" fill="url(#tg45)" /><polygon points="1021.4,326.4 1030.2,322.5 968.5,302.2 906.7,281.9 845.0,261.6 783.2,241.3 774.4,244.8 836.2,265.2 897.9,285.6 959.7,306.0" fill="url(#tg46)" /><polygon points="1028.5,323.3 1037.3,319.5 975.5,299.2 913.8,279.0 852.0,258.8 790.3,238.5 781.5,242.0 843.2,262.3 905.0,282.7 966.7,303.0" fill="url(#tg47)" /><polygon points="1035.5,320.2 1044.4,316.5 982.6,296.3 920.9,276.1 859.1,255.9 797.4,235.7 788.5,239.2 850.3,259.5 912.0,279.7 973.8,300.0" fill="url(#tg48)" /><polygon points="1042.6,317.3 1051.4,313.7 989.7,293.5 927.9,273.3 866.2,253.1 804.4,233.0 795.6,236.4 857.3,256.6 919.1,276.9 980.8,297.1" fill="url(#tg49)" /><polygon points="1049.6,314.4 1058.5,310.9 996.7,290.8 935.0,270.6 873.2,250.4 811.5,230.2 802.6,233.7 864.4,253.8 926.1,274.0 987.9,294.2" fill="url(#tg50)" /><polygon points="1056.7,311.6 1065.5,308.2 1003.8,288.1 942.0,267.9 880.3,247.7 818.5,227.5 809.7,230.9 871.5,251.1 933.2,271.3 995.0,291.4" fill="url(#tg51)" /><polygon points="1063.8,308.9 1072.6,305.6 1010.8,285.4 949.1,265.2 887.3,245.1 825.6,224.9 816.8,228.2 878.5,248.4 940.3,268.6 1002.0,288.7" fill="url(#tg52)" /><polygon points="1070.8,306.3 1079.7,303.1 1017.9,282.9 956.2,262.7 894.4,242.5 832.7,222.3 823.8,225.5 885.6,245.7 947.3,265.9 1009.1,286.1" fill="url(#tg53)" /><polygon points="1077.9,303.7 1086.7,300.6 1025.0,280.4 963.2,260.2 901.5,240.0 839.7,219.7 830.9,222.9 892.6,243.1 954.4,263.3 1016.1,283.5" fill="url(#tg54)" /><polygon points="1084.9,301.2 1093.8,298.2 1032.0,278.0 970.3,257.8 908.5,237.5 846.8,217.3 837.9,220.4 899.7,240.6 961.4,260.8 1023.2,281.0" fill="url(#tg55)" /><polygon points="1092.0,298.8 1100.8,295.9 1039.1,275.6 977.3,255.4 915.6,235.1 853.8,214.9 845.0,217.9 906.8,238.1 968.5,258.4 1030.3,278.6" fill="url(#tg56)" /><polygon points="1099.1,296.5 1107.9,293.6 1046.1,273.3 984.4,253.1 922.6,232.8 860.9,212.5 852.1,215.5 913.8,235.7 975.6,256.0 1037.3,276.2" fill="url(#tg57)" /><polygon points="1106.1,294.2 1115.0,291.3 1053.2,271.0 991.5,250.8 929.7,230.5 868.0,210.2 859.1,213.1 920.9,233.4 982.6,253.6 1044.4,273.9" fill="url(#tg58)" /><polygon points="1113.2,291.9 1122.0,289.1 1060.3,268.8 998.5,248.5 936.8,228.2 875.0,207.9 866.2,210.8 927.9,231.0 989.7,251.3 1051.4,271.6" fill="url(#tg59)" /><polygon points="1120.2,289.7 1129.1,286.9 1067.3,266.6 1005.6,246.3 943.8,225.9 882.1,205.6 873.2,208.5 935.0,228.8 996.7,249.1 1058.5,269.4" fill="url(#tg60)" /><polygon points="1127.3,287.4 1136.1,284.7 1074.4,264.4 1012.6,244.1 950.9,223.7 889.1,203.4 880.3,206.2 942.1,226.5 1003.8,246.8 1065.6,267.1" fill="url(#tg61)" /><polygon points="1134.4,285.3 1143.2,282.6 1081.4,262.2 1019.7,241.9 957.9,221.5 896.2,201.2 887.4,203.9 949.1,224.3 1010.9,244.6 1072.6,264.9" fill="url(#tg62)" /><polygon points="1141.4,283.1 1150.3,280.4 1088.5,260.1 1026.8,239.7 965.0,219.3 903.3,199.0 894.4,201.7 956.2,222.1 1017.9,242.4 1079.7,262.8" fill="url(#tg63)" /><polygon points="1148.5,281.0 1157.3,278.3 1095.6,257.9 1033.8,237.5 972.1,217.1 910.3,196.8 901.5,199.5 963.2,219.9 1025.0,240.2 1086.7,260.6" fill="url(#tg64)" /><polygon points="1155.5,278.8 1164.4,276.2 1102.6,255.8 1040.9,235.4 979.1,215.0 917.4,194.5 908.5,197.3 970.3,217.7 1032.0,238.1 1093.8,258.5" fill="url(#tg65)" /><polygon points="1162.6,276.7 1171.4,274.1 1109.7,253.7 1047.9,233.2 986.2,212.8 924.4,192.3 915.6,195.1 977.4,215.5 1039.1,235.9 1100.9,256.3" fill="url(#tg66)" /><polygon points="1169.7,274.6 1178.5,272.0 1116.7,251.5 1055.0,231.1 993.2,210.6 931.5,190.1 922.7,192.9 984.4,213.3 1046.2,233.8 1107.9,254.2" fill="url(#tg67)" /><polygon points="1176.7,272.5 1185.6,269.9 1123.8,249.4 1062.1,228.9 1000.3,208.4 938.6,187.9 929.7,190.7 991.5,211.1 1053.2,231.6 1115.0,252.1" fill="url(#tg68)" /><polygon points="1183.8,270.5 1192.6,267.9 1130.9,247.3 1069.1,226.7 1007.4,206.1 945.6,185.6 936.8,188.4 998.5,208.9 1060.3,229.4 1122.0,250.0" fill="url(#tg69)" /><polygon points="1190.8,268.4 1199.7,265.8 1137.9,245.2 1076.2,224.5 1014.4,203.9 952.7,183.3 943.8,186.1 1005.6,206.7 1067.3,227.3 1129.1,247.8" fill="url(#tg70)" /><polygon points="1197.9,266.3 1206.7,263.7 1145.0,243.0 1083.2,222.3 1021.5,201.6 959.7,180.9 950.9,183.8 1012.7,204.5 1074.4,225.1 1136.2,245.7" fill="url(#tg71)" /><polygon points="1205.0,264.2 1213.8,261.6 1152.0,240.8 1090.3,220.1 1028.5,199.3 966.8,178.6 958.0,181.5 1019.7,202.2 1081.5,222.9 1143.2,243.5" fill="url(#tg72)" /><polygon points="1212.0,262.1 1220.9,259.5 1159.1,238.7 1097.4,217.9 1035.6,197.0 973.9,176.2 965.0,179.2 1026.8,199.9 1088.5,220.6 1150.3,241.4" fill="url(#tg73)" /><polygon points="1219.1,260.0 1227.9,257.4 1166.2,236.5 1104.4,215.6 1042.7,194.7 980.9,173.8 972.1,176.8 1033.8,197.6 1095.6,218.4 1157.3,239.2" fill="url(#tg74)" /><polygon points="1226.1,257.9 1235.0,255.3 1173.2,234.3 1111.5,213.3 1049.7,192.4 988.0,171.4 979.1,174.4 1040.9,195.3 1102.6,216.2 1164.4,237.0" fill="url(#tg75)" /><polygon points="1233.2,255.8 1242.0,253.1 1180.3,232.1 1118.5,211.1 1056.8,190.1 995.0,169.0 986.2,172.0 1048.0,193.0 1109.7,213.9 1171.5,234.9" fill="url(#tg76)" /><polygon points="1240.3,253.6 1249.1,250.9 1187.3,229.9 1125.6,208.8 1063.8,187.7 1002.1,166.6 993.3,169.6 1055.0,190.6 1116.8,211.6 1178.5,232.6" fill="url(#tg77)" /><polygon points="1247.3,251.5 1256.2,248.8 1194.4,227.6 1132.7,206.5 1070.9,185.4 1009.2,164.2 1000.3,167.2 1062.1,188.3 1123.8,209.4 1185.6,230.4" fill="url(#tg78)" /><polygon points="1254.4,249.3 1263.2,246.6 1201.5,225.4 1139.7,204.2 1078.0,183.0 1016.2,161.8 1007.4,164.8 1069.1,185.9 1130.9,207.1 1192.6,228.2" fill="url(#tg79)" /><polygon points="1261.4,247.1 1270.3,244.4 1208.5,223.2 1146.8,201.9 1085.0,180.6 1023.3,159.4 1014.4,162.4 1076.2,183.6 1137.9,204.8 1199.7,226.0" fill="url(#tg80)" /><polygon points="1268.5,245.0 1277.3,242.3 1215.6,220.9 1153.8,199.6 1092.1,178.3 1030.3,157.0 1021.5,160.0 1083.3,181.2 1145.0,202.5 1206.8,223.7" fill="url(#tg81)" /><polygon points="1275.6,242.8 1284.4,240.1 1222.6,218.7 1160.9,197.3 1099.1,175.9 1037.4,154.5 1028.6,157.6 1090.3,178.9 1152.1,200.2 1213.8,221.5" fill="url(#tg82)" /><polygon points="1282.6,240.6 1291.5,237.9 1229.7,216.5 1168.0,195.0 1106.2,173.6 1044.5,152.1 1035.6,155.2 1097.4,176.5 1159.1,197.9 1220.9,219.3" fill="url(#tg83)" /><polygon points="1289.7,238.5 1298.5,235.7 1236.8,214.2 1175.0,192.7 1113.3,171.2 1051.5,149.7 1042.7,152.7 1104.4,174.2 1166.2,195.6 1227.9,217.0" fill="url(#tg84)" /><polygon points="1296.7,236.3 1305.6,233.6 1243.8,212.0 1182.1,190.4 1120.3,168.9 1058.6,147.3 1049.7,150.3 1111.5,171.8 1173.2,193.3 1235.0,214.8" fill="url(#tg85)" /><polygon points="1303.8,234.1 1312.6,231.4 1250.9,209.8 1189.1,188.1 1127.4,166.5 1065.6,144.9 1056.8,147.9 1118.6,169.5 1180.3,191.0 1242.1,212.6" fill="url(#tg86)" /><polygon points="1310.9,231.9 1319.7,229.2 1257.9,207.5 1196.2,185.9 1134.4,164.2 1072.7,142.5 1063.9,145.5 1125.6,167.1 1187.4,188.7 1249.1,210.3" fill="url(#tg87)" /><polygon points="1317.9,229.8 1326.8,227.0 1265.0,205.3 1203.3,183.6 1141.5,161.8 1079.8,140.1 1070.9,143.1 1132.7,164.8 1194.4,186.4 1256.2,208.1" fill="url(#tg88)" /><polygon points="1325.0,227.6 1333.8,224.9 1272.1,203.1 1210.3,181.3 1148.6,159.5 1086.8,137.7 1078.0,140.7 1139.7,162.4 1201.5,184.1 1263.2,205.9" fill="url(#tg89)" /><polygon points="1332.0,225.4 1340.9,222.7 1279.1,200.8 1217.4,179.0 1155.6,157.2 1093.9,135.3 1085.0,138.3 1146.8,160.1 1208.5,181.9 1270.3,203.6" fill="url(#tg90)" /><polygon points="1339.1,223.2 1347.9,220.5 1286.2,198.6 1224.4,176.7 1162.7,154.8 1100.9,133.0 1092.1,135.9 1153.9,157.8 1215.6,179.6 1277.4,201.4" fill="url(#tg91)" /><polygon points="1346.2,221.0 1355.0,218.3 1293.2,196.4 1231.5,174.5 1169.7,152.5 1108.0,130.6 1099.2,133.6 1160.9,155.4 1222.7,177.3 1284.4,199.2" fill="url(#tg92)" /><polygon points="1353.2,218.9 1362.1,216.1 1300.3,194.2 1238.6,172.2 1176.8,150.2 1115.1,128.2 1106.2,131.2 1168.0,153.1 1229.7,175.0 1291.5,196.9" fill="url(#tg93)" /><polygon points="1360.3,216.7 1369.1,214.0 1307.4,191.9 1245.6,169.9 1183.9,147.9 1122.1,125.8 1113.3,128.8 1175.0,150.8 1236.8,172.7 1298.5,194.7" fill="url(#tg94)" /><polygon points="1367.3,214.5 1376.2,211.8 1314.4,189.7 1252.7,167.6 1190.9,145.6 1129.2,123.5 1120.3,126.4 1182.1,148.5 1243.8,170.5 1305.6,192.5" fill="url(#tg95)" /><polygon points="1374.4,212.3 1383.2,209.6 1321.5,187.5 1259.7,165.4 1198.0,143.2 1136.2,121.1 1127.4,124.1 1189.2,146.1 1250.9,168.2 1312.7,190.3" fill="url(#tg96)" /><polygon points="1381.5,210.2 1390.3,207.4 1328.5,185.3 1266.8,163.1 1205.0,140.9 1143.3,118.7 1134.5,121.7 1196.2,143.8 1258.0,165.9 1319.7,188.0" fill="url(#tg97)" /><polygon points="1388.5,208.0 1397.4,205.2 1335.6,183.0 1273.9,160.8 1212.1,138.6 1150.4,116.4 1141.5,119.3 1203.3,141.5 1265.0,163.7 1326.8,185.8" fill="url(#tg98)" /><polygon points="1395.6,205.8 1403.0,203.5 1341.2,181.3 1279.5,159.0 1217.8,136.8 1156.0,114.5 1148.6,117.0 1210.3,139.2 1272.1,161.4 1333.8,183.6" fill="url(#tg99)" /><g fill="none" stroke="#33382c" stroke-opacity="0.6" stroke-width="0.85"><polyline points="732.3,508.4 707.6,499.7 682.9,491.0 658.2,482.2 633.5,473.5 608.8,464.8 584.1,456.1 559.4,447.4 534.7,438.7 510.0,430.0 485.3,421.2"/><polyline points="767.6,483.4 742.9,474.5 718.2,465.7 693.5,456.8 668.8,448.0 644.1,439.1 619.4,430.2 594.7,421.4 570.0,412.5 545.3,403.7 520.6,394.8"/><polyline points="802.9,458.3 778.2,449.3 753.5,440.3 728.8,431.3 704.1,422.3 679.4,413.3 654.7,404.3 630.0,395.3 605.3,386.3 580.6,377.3 555.9,368.4"/><polyline points="838.2,433.7 813.5,424.5 788.8,415.3 764.1,406.1 739.4,396.9 714.7,387.7 690.0,378.5 665.3,369.4 640.6,360.2 615.9,351.0 591.2,341.8"/><polyline points="873.5,409.9 848.8,400.6 824.1,391.3 799.4,382.1 774.7,372.8 750.0,363.5 725.3,354.2 700.6,345.0 675.9,335.7 651.2,326.4 626.5,317.2"/><polyline points="908.8,387.3 884.1,378.1 859.4,368.9 834.7,359.7 810.0,350.5 785.3,341.3 760.6,332.1 735.9,322.9 711.2,313.6 686.5,304.4 661.8,295.2"/><polyline points="944.1,366.2 919.4,357.2 894.7,348.3 870.0,339.3 845.3,330.3 820.6,321.4 795.9,312.4 771.2,303.5 746.5,294.5 721.8,285.5 697.1,276.6"/><polyline points="979.4,346.8 954.7,338.3 930.0,329.7 905.3,321.2 880.6,312.6 855.9,304.1 831.2,295.5 806.5,287.0 781.8,278.4 757.1,269.9 732.4,261.3"/><polyline points="1014.7,329.5 990.0,321.3 965.3,313.1 940.6,304.9 915.9,296.7 891.2,288.5 866.5,280.3 841.8,272.1 817.1,263.9 792.4,255.7 767.7,247.5"/><polyline points="1050.0,314.3 1025.3,306.2 1000.6,298.1 975.9,290.0 951.2,282.0 926.5,273.9 901.8,265.8 877.1,257.7 852.4,249.7 827.7,241.6 803.0,233.5"/><polyline points="1085.3,301.1 1060.6,293.0 1035.9,284.9 1011.2,276.8 986.5,268.8 961.8,260.7 937.1,252.6 912.4,244.5 887.7,236.4 863.0,228.3 838.3,220.2"/><polyline points="1120.6,289.5 1095.9,281.4 1071.2,273.3 1046.5,265.2 1021.8,257.1 997.1,248.9 972.4,240.8 947.7,232.7 923.0,224.6 898.3,216.5 873.6,208.3"/><polyline points="1155.9,278.7 1131.2,270.6 1106.5,262.4 1081.8,254.3 1057.1,246.1 1032.4,238.0 1007.7,229.8 983.0,221.7 958.3,213.5 933.6,205.3 908.9,197.2"/><polyline points="1191.2,268.3 1166.5,260.1 1141.8,251.8 1117.1,243.6 1092.4,235.4 1067.7,227.2 1043.0,218.9 1018.3,210.7 993.6,202.5 968.9,194.3 944.2,186.0"/><polyline points="1226.5,257.8 1201.8,249.5 1177.1,241.1 1152.4,232.8 1127.7,224.4 1103.0,216.1 1078.3,207.7 1053.6,199.4 1028.9,191.0 1004.2,182.7 979.5,174.3"/><polyline points="1261.8,247.0 1237.1,238.6 1212.4,230.1 1187.7,221.6 1163.0,213.1 1138.3,204.7 1113.6,196.2 1088.9,187.7 1064.2,179.2 1039.5,170.8 1014.8,162.3"/><polyline points="1297.1,236.2 1272.4,227.6 1247.7,219.0 1223.0,210.4 1198.3,201.8 1173.6,193.2 1148.9,184.6 1124.2,176.0 1099.5,167.4 1074.8,158.8 1050.1,150.2"/><polyline points="1332.4,225.3 1307.7,216.6 1283.0,207.9 1258.3,199.2 1233.6,190.5 1208.9,181.7 1184.2,173.0 1159.5,164.3 1134.8,155.6 1110.1,146.9 1085.4,138.2"/><polyline points="1367.7,214.4 1343.0,205.6 1318.3,196.8 1293.6,188.0 1268.9,179.2 1244.2,170.4 1219.5,161.6 1194.8,152.7 1170.1,143.9 1145.4,135.1 1120.7,126.3"/><polyline points="672.3,523.9 681.1,517.9 689.9,511.9 698.8,505.8 707.6,499.7 716.4,493.5 725.2,487.1 734.1,480.8 742.9,474.5 751.7,468.2 760.5,461.9 769.4,455.6 778.2,449.3 787.0,443.1 795.8,436.8 804.7,430.6 813.5,424.5 822.3,418.4 831.1,412.3 840.0,406.4 848.8,400.6 857.6,394.9 866.4,389.2 875.3,383.6 884.1,378.1 892.9,372.8 901.8,367.5 910.6,362.3 919.4,357.2 928.2,352.3 937.0,347.5 945.9,342.8 954.7,338.3 963.5,333.8 972.3,329.5 981.2,325.3 990.0,321.3 998.8,317.3 1007.6,313.5 1016.5,309.8 1025.3,306.2 1034.1,302.7 1043.0,299.4 1051.8,296.1 1060.6,293.0 1069.4,290.0 1078.2,287.1 1087.1,284.2 1095.9,281.4 1104.7,278.7 1113.5,275.9 1122.4,273.2 1131.2,270.6 1140.0,267.9 1148.8,265.3 1157.7,262.7 1166.5,260.1 1175.3,257.4 1184.1,254.8 1193.0,252.1 1201.8,249.5 1210.6,246.8 1219.5,244.0 1228.3,241.3 1237.1,238.6 1245.9,235.8 1254.7,233.1 1263.6,230.3 1272.4,227.6 1281.2,224.8 1290.0,222.1 1298.9,219.3 1307.7,216.6 1316.5,213.8 1325.3,211.1 1334.2,208.3 1343.0,205.6 1351.8,202.8 1360.6,200.1 1369.5,197.3 1378.3,194.6"/><polyline points="647.6,515.2 656.4,509.2 665.2,503.2 674.1,497.1 682.9,491.0 691.7,484.7 700.6,478.4 709.4,472.0 718.2,465.7 727.0,459.3 735.9,453.0 744.7,446.7 753.5,440.3 762.3,434.0 771.1,427.7 780.0,421.5 788.8,415.3 797.6,409.1 806.5,403.1 815.3,397.2 824.1,391.3 832.9,385.6 841.8,379.9 850.6,374.3 859.4,368.9 868.2,363.6 877.1,358.3 885.9,353.2 894.7,348.3 903.5,343.4 912.4,338.8 921.2,334.2 930.0,329.7 938.8,325.4 947.6,321.2 956.5,317.1 965.3,313.1 974.1,309.2 982.9,305.4 991.8,301.7 1000.6,298.1 1009.4,294.7 1018.3,291.3 1027.1,288.0 1035.9,284.9 1044.7,281.9 1053.5,279.0 1062.4,276.1 1071.2,273.3 1080.0,270.5 1088.8,267.8 1097.7,265.1 1106.5,262.4 1115.3,259.8 1124.1,257.1 1133.0,254.5 1141.8,251.8 1150.6,249.2 1159.4,246.5 1168.3,243.8 1177.1,241.1 1185.9,238.4 1194.8,235.6 1203.6,232.9 1212.4,230.1 1221.2,227.3 1230.0,224.5 1238.9,221.8 1247.7,219.0 1256.5,216.2 1265.3,213.4 1274.2,210.6 1283.0,207.9 1291.8,205.1 1300.6,202.3 1309.5,199.6 1318.3,196.8 1327.1,194.0 1335.9,191.2 1344.8,188.5 1353.6,185.7"/><polyline points="622.9,506.5 631.7,500.5 640.5,494.5 649.4,488.4 658.2,482.2 667.0,476.0 675.9,469.6 684.7,463.2 693.5,456.8 702.3,450.4 711.1,444.1 720.0,437.7 728.8,431.3 737.6,425.0 746.4,418.6 755.3,412.3 764.1,406.1 772.9,399.9 781.8,393.8 790.6,387.9 799.4,382.1 808.2,376.3 817.0,370.6 825.9,365.1 834.7,359.7 843.5,354.4 852.4,349.2 861.2,344.2 870.0,339.3 878.8,334.6 887.6,330.0 896.5,325.5 905.3,321.2 914.1,317.0 922.9,312.8 931.8,308.8 940.6,304.9 949.4,301.0 958.2,297.3 967.1,293.6 975.9,290.0 984.7,286.6 993.6,283.2 1002.4,280.0 1011.2,276.8 1020.0,273.8 1028.9,270.9 1037.7,268.0 1046.5,265.2 1055.3,262.4 1064.2,259.7 1073.0,257.0 1081.8,254.3 1090.6,251.6 1099.5,248.9 1108.3,246.3 1117.1,243.6 1125.9,240.9 1134.8,238.2 1143.6,235.5 1152.4,232.8 1161.2,230.0 1170.1,227.2 1178.9,224.4 1187.7,221.6 1196.5,218.8 1205.3,216.0 1214.2,213.2 1223.0,210.4 1231.8,207.6 1240.7,204.8 1249.5,202.0 1258.3,199.2 1267.1,196.4 1276.0,193.6 1284.8,190.8 1293.6,188.0 1302.4,185.2 1311.2,182.4 1320.1,179.6 1328.9,176.8"/><polyline points="598.2,497.8 607.0,491.8 615.9,485.8 624.7,479.7 633.5,473.5 642.3,467.2 651.2,460.8 660.0,454.4 668.8,448.0 677.6,441.5 686.5,435.1 695.3,428.7 704.1,422.3 712.9,415.9 721.8,409.6 730.6,403.2 739.4,396.9 748.2,390.7 757.1,384.6 765.9,378.6 774.7,372.8 783.5,367.0 792.4,361.4 801.2,355.8 810.0,350.5 818.8,345.2 827.7,340.1 836.5,335.1 845.3,330.3 854.1,325.7 863.0,321.2 871.8,316.9 880.6,312.6 889.4,308.5 898.2,304.5 907.1,300.5 915.9,296.7 924.7,292.9 933.5,289.1 942.4,285.5 951.2,282.0 960.0,278.5 968.9,275.2 977.7,271.9 986.5,268.8 995.3,265.7 1004.2,262.8 1013.0,259.9 1021.8,257.1 1030.6,254.3 1039.5,251.5 1048.3,248.8 1057.1,246.1 1065.9,243.4 1074.8,240.8 1083.6,238.1 1092.4,235.4 1101.2,232.7 1110.0,229.9 1118.9,227.2 1127.7,224.4 1136.5,221.6 1145.4,218.8 1154.2,216.0 1163.0,213.1 1171.8,210.3 1180.6,207.5 1189.5,204.6 1198.3,201.8 1207.1,198.9 1216.0,196.1 1224.8,193.3 1233.6,190.5 1242.4,187.6 1251.2,184.8 1260.1,182.0 1268.9,179.2 1277.7,176.4 1286.5,173.5 1295.4,170.7 1304.2,167.9"/><polyline points="573.5,489.1 582.3,483.1 591.1,477.1 600.0,471.0 608.8,464.8 617.6,458.5 626.5,452.1 635.3,445.6 644.1,439.1 652.9,432.7 661.8,426.2 670.6,419.8 679.4,413.3 688.2,406.9 697.0,400.5 705.9,394.1 714.7,387.7 723.5,381.5 732.4,375.3 741.2,369.4 750.0,363.5 758.8,357.7 767.6,352.1 776.5,346.6 785.3,341.3 794.1,336.1 803.0,331.0 811.8,326.1 820.6,321.4 829.4,316.8 838.2,312.5 847.1,308.2 855.9,304.1 864.7,300.1 873.5,296.1 882.4,292.3 891.2,288.5 900.0,284.7 908.8,281.0 917.7,277.4 926.5,273.9 935.3,270.4 944.2,267.1 953.0,263.8 961.8,260.7 970.6,257.6 979.5,254.7 988.3,251.8 997.1,248.9 1005.9,246.2 1014.8,243.4 1023.6,240.7 1032.4,238.0 1041.2,235.3 1050.0,232.6 1058.9,229.9 1067.7,227.2 1076.5,224.4 1085.3,221.6 1094.2,218.9 1103.0,216.1 1111.8,213.2 1120.7,210.4 1129.5,207.5 1138.3,204.7 1147.1,201.8 1155.9,198.9 1164.8,196.1 1173.6,193.2 1182.4,190.3 1191.2,187.5 1200.1,184.6 1208.9,181.7 1217.7,178.9 1226.5,176.0 1235.4,173.2 1244.2,170.4 1253.0,167.5 1261.8,164.7 1270.7,161.8 1279.5,159.0"/><polyline points="548.8,480.3 557.6,474.4 566.5,468.4 575.3,462.3 584.1,456.1 592.9,449.8 601.8,443.3 610.6,436.8 619.4,430.2 628.2,423.8 637.0,417.3 645.9,410.8 654.7,404.3 663.5,397.9 672.3,391.4 681.2,384.9 690.0,378.5 698.8,372.2 707.7,366.1 716.5,360.1 725.3,354.2 734.1,348.5 743.0,342.8 751.8,337.4 760.6,332.1 769.4,326.9 778.2,321.9 787.1,317.1 795.9,312.4 804.7,308.0 813.5,303.7 822.4,299.6 831.2,295.5 840.0,291.6 848.8,287.8 857.7,284.0 866.5,280.3 875.3,276.6 884.1,272.9 893.0,269.3 901.8,265.8 910.6,262.4 919.5,259.0 928.3,255.7 937.1,252.6 945.9,249.5 954.8,246.6 963.6,243.7 972.4,240.8 981.2,238.0 990.0,235.3 998.9,232.5 1007.7,229.8 1016.5,227.1 1025.3,224.4 1034.2,221.7 1043.0,218.9 1051.8,216.2 1060.6,213.4 1069.5,210.5 1078.3,207.7 1087.1,204.8 1096.0,202.0 1104.8,199.1 1113.6,196.2 1122.4,193.3 1131.2,190.4 1140.1,187.5 1148.9,184.6 1157.7,181.7 1166.5,178.8 1175.4,175.9 1184.2,173.0 1193.0,170.2 1201.8,167.3 1210.7,164.4 1219.5,161.6 1228.3,158.7 1237.1,155.8 1246.0,153.0 1254.8,150.1"/><polyline points="524.1,471.6 532.9,465.7 541.8,459.7 550.6,453.6 559.4,447.4 568.2,441.0 577.1,434.5 585.9,428.0 594.7,421.4 603.5,414.9 612.4,408.4 621.2,401.9 630.0,395.3 638.8,388.8 647.6,382.3 656.5,375.8 665.3,369.4 674.1,363.0 683.0,356.9 691.8,350.9 700.6,345.0 709.4,339.2 718.2,333.6 727.1,328.1 735.9,322.9 744.7,317.7 753.6,312.8 762.4,308.0 771.2,303.5 780.0,299.1 788.9,294.9 797.7,290.9 806.5,287.0 815.3,283.2 824.1,279.4 833.0,275.7 841.8,272.1 850.6,268.4 859.4,264.8 868.3,261.3 877.1,257.7 885.9,254.3 894.8,250.9 903.6,247.7 912.4,244.5 921.2,241.4 930.1,238.5 938.9,235.6 947.7,232.7 956.5,229.9 965.4,227.1 974.2,224.4 983.0,221.7 991.8,218.9 1000.6,216.2 1009.5,213.5 1018.3,210.7 1027.1,207.9 1035.9,205.1 1044.8,202.2 1053.6,199.4 1062.4,196.5 1071.2,193.6 1080.1,190.6 1088.9,187.7 1097.7,184.8 1106.5,181.8 1115.4,178.9 1124.2,176.0 1133.0,173.1 1141.8,170.1 1150.7,167.2 1159.5,164.3 1168.3,161.4 1177.1,158.5 1186.0,155.6 1194.8,152.7 1203.6,149.9 1212.4,147.0 1221.3,144.1 1230.1,141.2"/><polyline points="499.4,462.9 508.2,457.0 517.0,451.0 525.9,444.9 534.7,438.7 543.5,432.3 552.4,425.8 561.2,419.1 570.0,412.5 578.8,406.0 587.6,399.4 596.5,392.9 605.3,386.3 614.1,379.8 622.9,373.2 631.8,366.6 640.6,360.2 649.4,353.8 658.2,347.6 667.1,341.6 675.9,335.7 684.7,329.9 693.5,324.3 702.4,318.9 711.2,313.6 720.0,308.6 728.9,303.7 737.7,299.0 746.5,294.5 755.3,290.3 764.1,286.2 773.0,282.2 781.8,278.4 790.6,274.7 799.4,271.1 808.3,267.5 817.1,263.9 825.9,260.3 834.7,256.7 843.6,253.2 852.4,249.7 861.2,246.2 870.1,242.9 878.9,239.6 887.7,236.4 896.5,233.4 905.4,230.4 914.2,227.4 923.0,224.6 931.8,221.8 940.6,219.0 949.5,216.2 958.3,213.5 967.1,210.8 975.9,208.0 984.8,205.3 993.6,202.5 1002.4,199.7 1011.2,196.8 1020.1,193.9 1028.9,191.0 1037.7,188.1 1046.6,185.1 1055.4,182.2 1064.2,179.2 1073.0,176.3 1081.8,173.3 1090.7,170.3 1099.5,167.4 1108.3,164.4 1117.2,161.5 1126.0,158.5 1134.8,155.6 1143.6,152.7 1152.5,149.8 1161.3,146.8 1170.1,143.9 1178.9,141.0 1187.8,138.1 1196.6,135.2 1205.4,132.3"/><polyline points="474.7,454.2 483.5,448.3 492.4,442.3 501.2,436.2 510.0,430.0 518.8,423.6 527.7,417.0 536.5,410.3 545.3,403.7 554.1,397.1 563.0,390.5 571.8,383.9 580.6,377.3 589.4,370.7 598.2,364.1 607.1,357.5 615.9,351.0 624.7,344.6 633.6,338.4 642.4,332.4 651.2,326.4 660.0,320.6 668.9,315.0 677.7,309.6 686.5,304.4 695.3,299.4 704.2,294.6 713.0,289.9 721.8,285.5 730.6,281.4 739.5,277.4 748.3,273.6 757.1,269.9 765.9,266.3 774.8,262.7 783.6,259.2 792.4,255.7 801.2,252.1 810.0,248.6 818.9,245.1 827.7,241.6 836.5,238.2 845.4,234.8 854.2,231.5 863.0,228.3 871.8,225.3 880.7,222.3 889.5,219.3 898.3,216.5 907.1,213.6 916.0,210.9 924.8,208.1 933.6,205.3 942.4,202.6 951.2,199.8 960.1,197.1 968.9,194.3 977.7,191.4 986.5,188.5 995.4,185.6 1004.2,182.7 1013.0,179.7 1021.9,176.7 1030.7,173.8 1039.5,170.8 1048.3,167.8 1057.1,164.8 1066.0,161.8 1074.8,158.8 1083.6,155.8 1092.5,152.8 1101.3,149.9 1110.1,146.9 1118.9,144.0 1127.8,141.0 1136.6,138.1 1145.4,135.1 1154.2,132.2 1163.0,129.3 1171.9,126.3 1180.7,123.4"/></g><polygon points="697.0,532.6 705.8,526.6 714.6,520.6 723.5,514.5 732.3,508.4 741.1,502.2 750.0,495.9 758.8,489.6 767.6,483.4 776.4,477.1 785.2,470.8 794.1,464.6 802.9,458.3 811.7,452.1 820.5,445.9 829.4,439.8 838.2,433.7 847.0,427.6 855.9,421.6 864.7,415.7 873.5,409.9 882.3,404.1 891.1,398.4 900.0,392.8 908.8,387.3 917.6,381.9 926.5,376.6 935.3,371.3 944.1,366.2 952.9,361.2 961.8,356.3 970.6,351.5 979.4,346.8 988.2,342.3 997.0,337.9 1005.9,333.6 1014.7,329.5 1023.5,325.5 1032.3,321.6 1041.2,317.9 1050.0,314.3 1058.8,310.8 1067.7,307.4 1076.5,304.2 1085.3,301.1 1094.1,298.1 1103.0,295.2 1111.8,292.3 1120.6,289.5 1129.4,286.8 1138.2,284.1 1147.1,281.4 1155.9,278.7 1164.7,276.1 1173.5,273.5 1182.4,270.9 1191.2,268.3 1200.0,265.7 1208.8,263.1 1217.7,260.5 1226.5,257.8 1235.3,255.1 1244.2,252.5 1253.0,249.7 1261.8,247.0 1270.6,244.3 1279.4,241.6 1288.3,238.9 1297.1,236.2 1305.9,233.5 1314.8,230.7 1323.6,228.0 1332.4,225.3 1341.2,222.6 1350.0,219.9 1358.9,217.1 1367.7,214.4 1376.5,211.7 1385.3,209.0 1394.2,206.2 1403.0,203.5 1403.0,203.5 1378.3,194.6 1353.6,185.7 1328.9,176.8 1304.2,167.9 1279.5,159.0 1254.8,150.1 1230.1,141.2 1205.4,132.3 1180.7,123.4 1156.0,114.5 1156.0,114.5 1147.2,117.4 1138.3,120.4 1129.5,123.4 1120.7,126.3 1111.9,129.3 1103.0,132.2 1094.2,135.2 1085.4,138.2 1076.6,141.2 1067.8,144.2 1058.9,147.2 1050.1,150.2 1041.3,153.2 1032.4,156.2 1023.6,159.3 1014.8,162.3 1006.0,165.3 997.2,168.3 988.3,171.3 979.5,174.3 970.7,177.3 961.8,180.2 953.0,183.2 944.2,186.0 935.4,188.9 926.5,191.7 917.7,194.4 908.9,197.2 900.1,200.0 891.2,202.7 882.4,205.5 873.6,208.3 864.8,211.2 856.0,214.2 847.1,217.2 838.3,220.2 829.5,223.4 820.7,226.7 811.8,230.1 803.0,233.5 794.2,237.0 785.3,240.5 776.5,244.0 767.7,247.5 758.9,250.9 750.0,254.4 741.2,257.8 732.4,261.3 723.6,264.9 714.8,268.6 705.9,272.5 697.1,276.6 688.3,280.9 679.5,285.5 670.6,290.2 661.8,295.2 653.0,300.4 644.1,305.7 635.3,311.4 626.5,317.2 617.7,323.1 608.9,329.1 600.0,335.4 591.2,341.8 582.4,348.3 573.5,355.0 564.7,361.7 555.9,368.4 547.1,375.0 538.2,381.6 529.4,388.2 520.6,394.8 511.8,401.5 503.0,408.2 494.1,414.8 485.3,421.2 476.5,427.5 467.6,433.6 458.8,439.6 450.0,445.5 450.0,445.5 474.7,454.2 499.4,462.9 524.1,471.6 548.8,480.3 573.5,489.1 598.2,497.8 622.9,506.5 647.6,515.2 672.3,523.9 697.0,532.6" fill="none" stroke="#2a3018" stroke-width="1.1"/><polyline points="573.5,489.1 582.3,483.1 591.1,477.1 600.0,471.0 608.8,464.8 617.6,458.5 626.5,452.1 635.3,445.6 644.1,439.1 652.9,432.7 661.8,426.2 670.6,419.8 679.4,413.3 688.2,406.9 697.0,400.5 705.9,394.1 714.7,387.7 723.5,381.5 732.4,375.3 741.2,369.4 750.0,363.5 758.8,357.7 767.6,352.1 776.5,346.6 785.3,341.3 794.1,336.1 803.0,331.0 811.8,326.1 820.6,321.4 829.4,316.8 838.2,312.5 847.1,308.2 855.9,304.1 864.7,300.1 873.5,296.1 882.4,292.3 891.2,288.5 900.0,284.7 908.8,281.0 917.7,277.4 926.5,273.9 935.3,270.4 944.2,267.1 953.0,263.8 961.8,260.7 970.6,257.6 979.5,254.7 988.3,251.8 997.1,248.9 1005.9,246.2 1014.8,243.4 1023.6,240.7 1032.4,238.0 1041.2,235.3 1050.0,232.6 1058.9,229.9 1067.7,227.2 1076.5,224.4 1085.3,221.6 1094.2,218.9 1103.0,216.1 1111.8,213.2 1120.7,210.4 1129.5,207.5 1138.3,204.7 1147.1,201.8 1155.9,198.9 1164.8,196.1 1173.6,193.2 1182.4,190.3 1191.2,187.5 1200.1,184.6 1208.9,181.7 1217.7,178.9 1226.5,176.0 1235.4,173.2 1244.2,170.4 1253.0,167.5 1261.8,164.7 1270.7,161.8 1279.5,159.0" fill="none" stroke="#3a3a3a" stroke-width="1.1"/><polyline points="573.5,489.1 582.3,483.1 591.1,477.1 600.0,471.0 608.8,464.8 617.6,458.5 626.5,452.1 635.3,445.6 644.1,439.1 652.9,432.7 661.8,426.2 670.6,419.8 679.4,413.3 688.2,406.9 697.0,400.5 705.9,394.1 714.7,387.7 723.5,381.5 732.4,375.3 741.2,369.4 750.0,363.5 758.8,357.7 767.6,352.1 776.5,346.6 785.3,341.3 794.1,336.1 803.0,331.0 811.8,326.1 820.6,321.4 829.4,316.8 838.2,312.5 847.1,308.2 855.9,304.1 864.7,300.1 873.5,296.1 882.4,292.3 891.2,288.5 900.0,284.7 908.8,281.0 917.7,277.4 926.5,273.9 935.3,270.4 944.2,267.1 953.0,263.8 961.8,260.7 970.6,257.6 979.5,254.7 988.3,251.8 997.1,248.9 1005.9,246.2 1014.8,243.4 1023.6,240.7 1032.4,238.0 1041.2,235.3 1050.0,232.6 1058.9,229.9 1067.7,227.2 1076.5,224.4 1085.3,221.6 1094.2,218.9 1103.0,216.1 1111.8,213.2 1120.7,210.4 1129.5,207.5 1138.3,204.7 1147.1,201.8 1155.9,198.9 1164.8,196.1 1173.6,193.2 1182.4,190.3 1191.2,187.5 1200.1,184.6 1208.9,181.7 1217.7,178.9 1226.5,176.0 1235.4,173.2 1244.2,170.4 1253.0,167.5 1261.8,164.7 1270.7,161.8 1279.5,159.0" fill="none" stroke="#f4f4f4" stroke-width="1.2" stroke-dasharray="2.2 1.1"/><polyline points="1085.3,301.1 1073.0,297.1 1060.6,293.0 1048.2,289.0 1035.9,284.9 1023.5,280.9 1011.2,276.8 998.8,272.8 986.5,268.8 974.1,264.7 961.8,260.7 949.4,256.6 937.1,252.6 924.8,248.5 912.4,244.5 900.0,240.5 887.7,236.4 875.3,232.4 863.0,228.3 850.6,224.3 838.3,220.2" fill="none" stroke="#3a3a3a" stroke-width="1.1"/><polyline points="1085.3,301.1 1073.0,297.1 1060.6,293.0 1048.2,289.0 1035.9,284.9 1023.5,280.9 1011.2,276.8 998.8,272.8 986.5,268.8 974.1,264.7 961.8,260.7 949.4,256.6 937.1,252.6 924.8,248.5 912.4,244.5 900.0,240.5 887.7,236.4 875.3,232.4 863.0,228.3 850.6,224.3 838.3,220.2" fill="none" stroke="#f4f4f4" stroke-width="1.2" stroke-dasharray="2.2 1.1"/><defs><pattern id="dots" patternUnits="userSpaceOnUse" width="3" height="4"><rect x="1" y="1" width="1" height="1" fill="#000" fill-opacity="0.35"/></pattern></defs><rect x="692" y="533" width="10" height="126" fill="#e8e6bc"/><rect x="692" y="533" width="4.5" height="126" fill="#000" fill-opacity="0.13"/><rect x="692" y="659" width="10" height="42" fill="#9ab6c6"/><rect x="692" y="659" width="4.5" height="42" fill="#000" fill-opacity="0.13"/><rect x="692" y="701" width="10" height="42.5" fill="#8a8ab8"/><rect x="692" y="701" width="4.5" height="42.5" fill="#000" fill-opacity="0.13"/><rect x="692" y="743.5" width="10" height="41.0" fill="#9ac49a"/><rect x="692" y="743.5" width="4.5" height="41.0" fill="#000" fill-opacity="0.13"/><rect x="692" y="784.5" width="10" height="22.5" fill="#a89888"/><rect x="692" y="784.5" width="4.5" height="22.5" fill="#000" fill-opacity="0.13"/><rect x="692" y="533" width="10" height="274" fill="url(#dots)" opacity="0.6"/><rect x="798" y="460" width="10" height="34" fill="#98b8c8"/><rect x="798" y="460" width="4.5" height="34" fill="#000" fill-opacity="0.13"/><rect x="798" y="494" width="10" height="35" fill="#8888b8"/><rect x="798" y="494" width="4.5" height="35" fill="#000" fill-opacity="0.13"/><rect x="798" y="529" width="10" height="65" fill="#98c498"/><rect x="798" y="529" width="4.5" height="65" fill="#000" fill-opacity="0.13"/><rect x="798" y="460" width="10" height="134" fill="url(#dots)" opacity="0.6"/><rect x="856" y="416" width="10" height="35" fill="#98b8c8"/><rect x="856" y="416" width="4.5" height="35" fill="#000" fill-opacity="0.13"/><rect x="856" y="451" width="10" height="41" fill="#8888b8"/><rect x="856" y="451" width="4.5" height="41" fill="#000" fill-opacity="0.13"/><rect x="856" y="492" width="10" height="41.5" fill="#98c498"/><rect x="856" y="492" width="4.5" height="41.5" fill="#000" fill-opacity="0.13"/><rect x="856" y="533.5" width="10" height="123.5" fill="#a89888"/><rect x="856" y="533.5" width="4.5" height="123.5" fill="#000" fill-opacity="0.13"/><rect x="856" y="416" width="10" height="241" fill="url(#dots)" opacity="0.6"/><rect x="959" y="357" width="6" height="50" fill="#a4bca4"/><rect x="959" y="357" width="2.7" height="50" fill="#000" fill-opacity="0.13"/><rect x="959" y="407" width="6" height="21" fill="#d09a9a"/><rect x="959" y="407" width="2.7" height="21" fill="#000" fill-opacity="0.13"/><rect x="959" y="357" width="6" height="71" fill="url(#dots)" opacity="0.6"/><rect x="1277" y="240" width="8" height="88" fill="#98c098"/><rect x="1277" y="240" width="3.6" height="88" fill="#000" fill-opacity="0.13"/><rect x="1277" y="328" width="8" height="125" fill="#a8988a"/><rect x="1277" y="328" width="3.6" height="125" fill="#000" fill-opacity="0.13"/><rect x="1277" y="240" width="8" height="213" fill="url(#dots)" opacity="0.6"/><rect x="747" y="494" width="3" height="124" fill="#111"/><rect x="750" y="494" width="7" height="124" fill="#b0a090"/><rect x="747" y="616" width="10" height="2" fill="#111"/><g transform="translate(450,445.5)"><path d="M-6,-4 L0,-6 L6,-4 L6,3 L0,5.5 L-6,3 Z" fill="#62a8cc"/><path d="M-6,-4 L0,-2 L6,-4 L0,-6 Z" fill="#7cc0dc"/><path d="M-6,-4 L0,-2 L0,5.5 L-6,3 Z" fill="#4a8eb4"/><path d="M-3,-4 L0,-5 L3,-4 L0,-3 Z" fill="#1a3040"/></g><g transform="translate(1157,112)"><path d="M-6,-4 L0,-6 L6,-4 L6,3 L0,5.5 L-6,3 Z" fill="#62a8cc"/><path d="M-6,-4 L0,-2 L6,-4 L0,-6 Z" fill="#7cc0dc"/><path d="M-6,-4 L0,-2 L0,5.5 L-6,3 Z" fill="#4a8eb4"/><path d="M-3,-4 L0,-5 L3,-4 L0,-3 Z" fill="#1a3040"/></g><g transform="translate(1403,202.5)"><path d="M-6,-4 L0,-6 L6,-4 L6,3 L0,5.5 L-6,3 Z" fill="#62a8cc"/><path d="M-6,-4 L0,-2 L6,-4 L0,-6 Z" fill="#7cc0dc"/><path d="M-6,-4 L0,-2 L0,5.5 L-6,3 Z" fill="#4a8eb4"/><path d="M-3,-4 L0,-5 L3,-4 L0,-3 Z" fill="#1a3040"/></g><g transform="translate(944,365.5)"><path d="M-6,-4 L0,-6 L6,-4 L6,3 L0,5.5 L-6,3 Z" fill="#62a8cc"/><path d="M-6,-4 L0,-2 L6,-4 L0,-6 Z" fill="#7cc0dc"/><path d="M-6,-4 L0,-2 L0,5.5 L-6,3 Z" fill="#4a8eb4"/><path d="M-3,-4 L0,-5 L3,-4 L0,-3 Z" fill="#1a3040"/></g><g transform="translate(697,534)"><path d="M-6,-4 L0,-6 L6,-4 L6,3 L0,5.5 L-6,3 Z" fill="#62a8cc"/><path d="M-6,-4 L0,-2 L6,-4 L0,-6 Z" fill="#7cc0dc"/><path d="M-6,-4 L0,-2 L0,5.5 L-6,3 Z" fill="#4a8eb4"/><path d="M-3,-4 L0,-5 L3,-4 L0,-3 Z" fill="#1a3040"/></g><g transform="translate(802.5,458)"><path d="M-6,-4 L0,-6 L6,-4 L6,3 L0,5.5 L-6,3 Z" fill="#62a8cc"/><path d="M-6,-4 L0,-2 L6,-4 L0,-6 Z" fill="#7cc0dc"/><path d="M-6,-4 L0,-2 L0,5.5 L-6,3 Z" fill="#4a8eb4"/><path d="M-3,-4 L0,-5 L3,-4 L0,-3 Z" fill="#1a3040"/></g><g transform="translate(1280,158)"><path d="M-6,-2 L0,-4 L6,-2 L6,2 L0,4 L-6,2 Z" fill="#6ab8cc"/><path d="M-6,-2 L0,0 L0,4 L-6,2 Z" fill="#4e96a8"/><path d="M-3,-2.2 L0,-3.2 L3,-2.2 L0,-1.2 Z" fill="#1a3840"/></g><g transform="translate(590,341)"><path d="M-6,-2 L0,-4 L6,-2 L6,2 L0,4 L-6,2 Z" fill="#6ab8cc"/><path d="M-6,-2 L0,0 L0,4 L-6,2 Z" fill="#4e96a8"/><path d="M-3,-2.2 L0,-3.2 L3,-2.2 L0,-1.2 Z" fill="#1a3840"/></g><g transform="translate(698,276)"><path d="M-6,-2 L0,-4 L6,-2 L6,2 L0,4 L-6,2 Z" fill="#6ab8cc"/><path d="M-6,-2 L0,0 L0,4 L-6,2 Z" fill="#4e96a8"/><path d="M-3,-2.2 L0,-3.2 L3,-2.2 L0,-1.2 Z" fill="#1a3840"/></g><g transform="translate(638,321)"><path d="M-6,-2 L0,-4 L6,-2 L6,2 L0,4 L-6,2 Z" fill="#6ab8cc"/><path d="M-6,-2 L0,0 L0,4 L-6,2 Z" fill="#4e96a8"/><path d="M-3,-2.2 L0,-3.2 L3,-2.2 L0,-1.2 Z" fill="#1a3840"/></g><g transform="translate(749,364)"><path d="M-6,-2 L0,-4 L6,-2 L6,2 L0,4 L-6,2 Z" fill="#6ab8cc"/><path d="M-6,-2 L0,0 L0,4 L-6,2 Z" fill="#4e96a8"/><path d="M-3,-2.2 L0,-3.2 L3,-2.2 L0,-1.2 Z" fill="#1a3840"/></g><g transform="translate(704,397)"><path d="M-6,-2 L0,-4 L6,-2 L6,2 L0,4 L-6,2 Z" fill="#6ab8cc"/><path d="M-6,-2 L0,0 L0,4 L-6,2 Z" fill="#4e96a8"/><path d="M-3,-2.2 L0,-3.2 L3,-2.2 L0,-1.2 Z" fill="#1a3840"/></g><g transform="translate(861,405)"><path d="M-6,-2 L0,-4 L6,-2 L6,2 L0,4 L-6,2 Z" fill="#6ab8cc"/><path d="M-6,-2 L0,0 L0,4 L-6,2 Z" fill="#4e96a8"/><path d="M-3,-2.2 L0,-3.2 L3,-2.2 L0,-1.2 Z" fill="#1a3840"/></g><g transform="translate(961,263)"><path d="M-6,-2 L0,-4 L6,-2 L6,2 L0,4 L-6,2 Z" fill="#6ab8cc"/><path d="M-6,-2 L0,0 L0,4 L-6,2 Z" fill="#4e96a8"/><path d="M-3,-2.2 L0,-3.2 L3,-2.2 L0,-1.2 Z" fill="#1a3840"/></g><path d="M927.3 253.2 V268.6 M927.8 253.6 L922.8 257.4" stroke="#ff0000" stroke-width="2" fill="none"/><text x="951" y="256.6" font-family="Liberation Sans, sans-serif" font-size="21.5" fill="#ff0000">2</text></g></svg></body></html>
